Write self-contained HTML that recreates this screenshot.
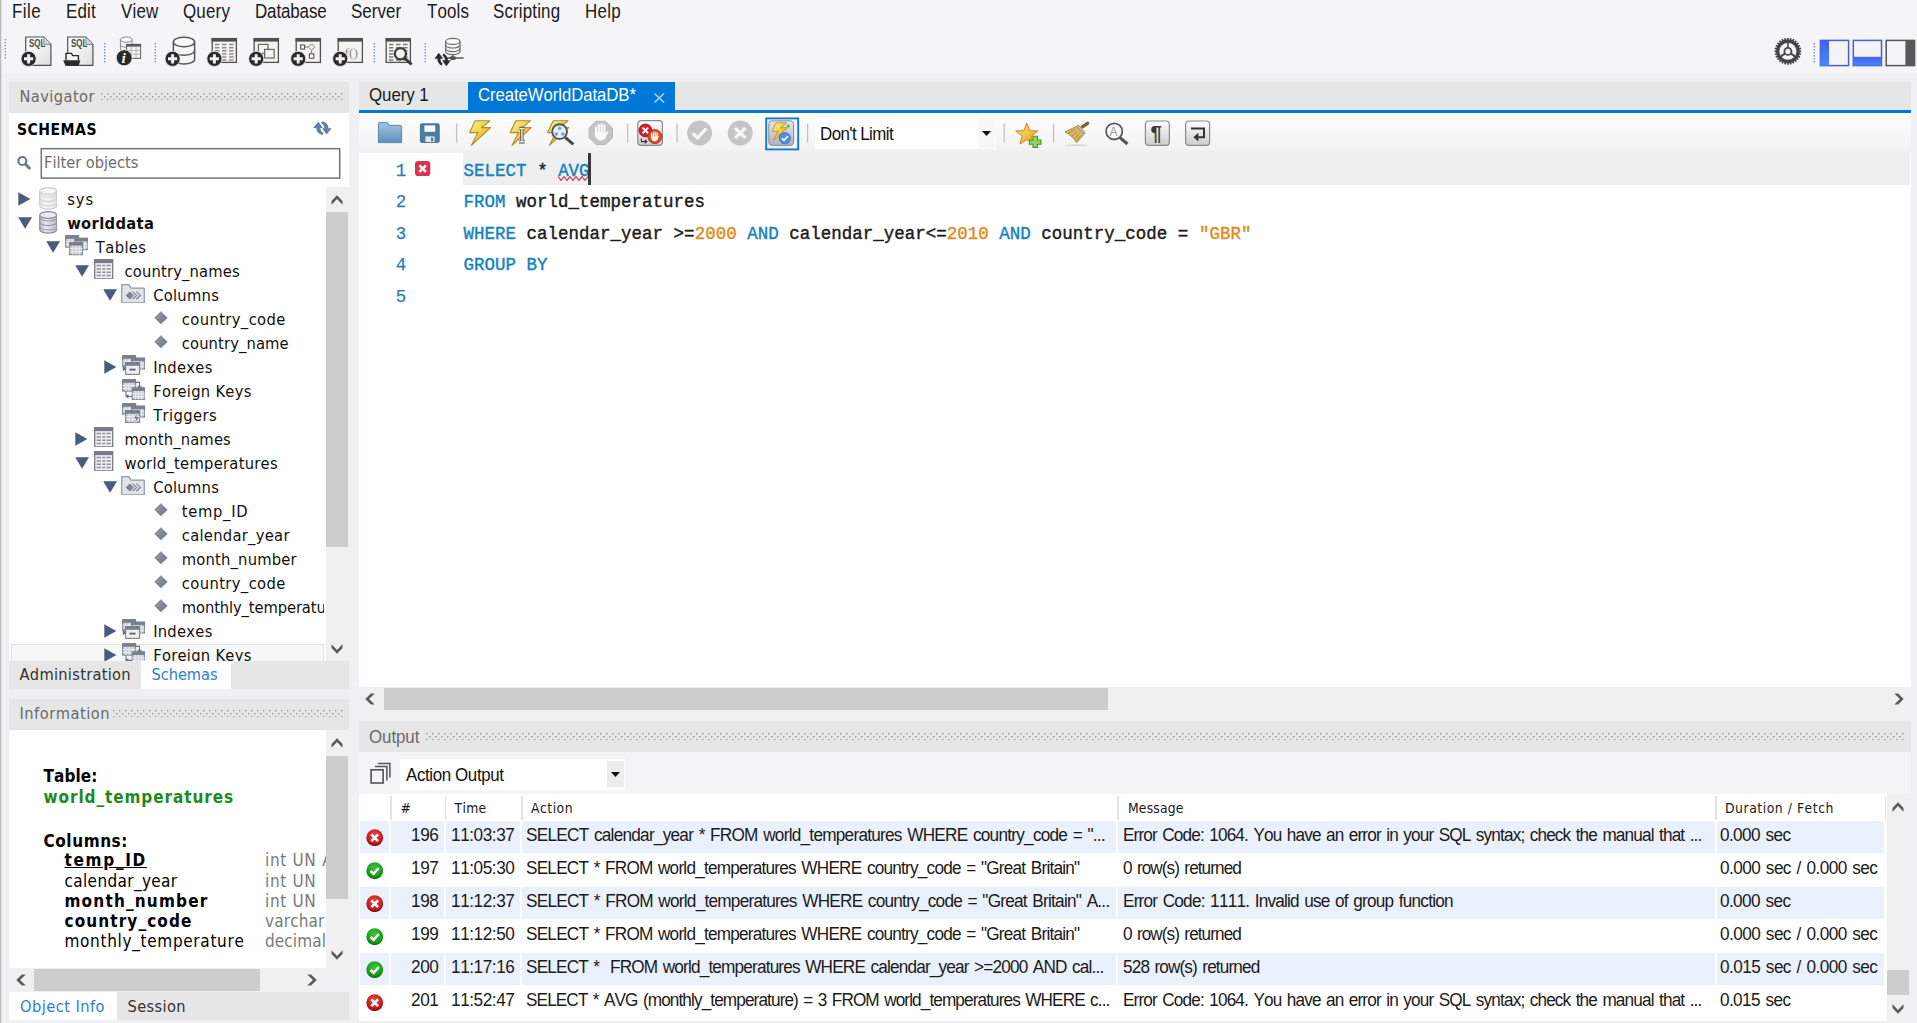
<!DOCTYPE html>
<html><head><meta charset="utf-8"><title>MySQL Workbench</title><style>
html,body{margin:0;padding:0}
body{width:1917px;height:1023px;overflow:hidden;background:#f0f0f3;position:relative;font-kerning:none;-webkit-font-smoothing:antialiased}
.b{position:absolute;display:block}
.t{position:absolute;white-space:pre;display:block}
</style></head><body>
<div class="b" style="left:0px;top:0px;width:1917px;height:72.5px;background:#f5f5f8;"></div>
<div class="b" style="left:0px;top:0px;width:1px;height:1023px;background:#b9b9b9;"></div>
<div class="b" style="left:1px;top:0px;width:1px;height:1023px;background:#e2e2e4;"></div>
<span class="t" style="font-family:'Liberation Sans',sans-serif;font-size:19.3px;line-height:25px;color:#1a1a1a;top:-0.59px;letter-spacing:0.494px;left:12.00px;transform:scaleX(0.88);transform-origin:0 0;">File</span>
<span class="t" style="font-family:'Liberation Sans',sans-serif;font-size:19.3px;line-height:25px;color:#1a1a1a;top:-0.59px;letter-spacing:0.181px;left:65.70px;transform:scaleX(0.88);transform-origin:0 0;">Edit</span>
<span class="t" style="font-family:'Liberation Sans',sans-serif;font-size:19.3px;line-height:25px;color:#1a1a1a;top:-0.59px;letter-spacing:0.227px;left:121.00px;transform:scaleX(0.88);transform-origin:0 0;">View</span>
<span class="t" style="font-family:'Liberation Sans',sans-serif;font-size:19.3px;line-height:25px;color:#1a1a1a;top:-0.59px;letter-spacing:0.194px;left:182.50px;transform:scaleX(0.88);transform-origin:0 0;">Query</span>
<span class="t" style="font-family:'Liberation Sans',sans-serif;font-size:19.3px;line-height:25px;color:#1a1a1a;top:-0.59px;letter-spacing:-0.155px;left:254.50px;transform:scaleX(0.88);transform-origin:0 0;">Database</span>
<span class="t" style="font-family:'Liberation Sans',sans-serif;font-size:19.3px;line-height:25px;color:#1a1a1a;top:-0.59px;letter-spacing:0.016px;left:350.50px;transform:scaleX(0.88);transform-origin:0 0;">Server</span>
<span class="t" style="font-family:'Liberation Sans',sans-serif;font-size:19.3px;line-height:25px;color:#1a1a1a;top:-0.59px;letter-spacing:0.137px;left:426.50px;transform:scaleX(0.88);transform-origin:0 0;">Tools</span>
<span class="t" style="font-family:'Liberation Sans',sans-serif;font-size:19.3px;line-height:25px;color:#1a1a1a;top:-0.59px;letter-spacing:0.156px;left:493.20px;transform:scaleX(0.88);transform-origin:0 0;">Scripting</span>
<span class="t" style="font-family:'Liberation Sans',sans-serif;font-size:19.3px;line-height:25px;color:#1a1a1a;top:-0.59px;letter-spacing:0.307px;left:584.80px;transform:scaleX(0.88);transform-origin:0 0;">Help</span>
<svg class="b" style="left:0px;top:0px;" width="1917" height="72" viewBox="0 0 1917 72"><defs><linearGradient id="docg" x1="0" y1="0" x2="1" y2="1"><stop offset="0" stop-color="#fdfdfd"/><stop offset="0.5" stop-color="#f1f1f1"/><stop offset="1" stop-color="#dedede"/></linearGradient></defs><rect x="4.6" y="39" width="1.4" height="1.4" fill="#7790b6"/><rect x="4.6" y="42" width="1.4" height="1.4" fill="#7790b6"/><rect x="4.6" y="45" width="1.4" height="1.4" fill="#7790b6"/><rect x="4.6" y="48" width="1.4" height="1.4" fill="#7790b6"/><rect x="4.6" y="51" width="1.4" height="1.4" fill="#7790b6"/><rect x="4.6" y="54" width="1.4" height="1.4" fill="#7790b6"/><rect x="4.6" y="57" width="1.4" height="1.4" fill="#7790b6"/><rect x="104" y="43" width="1.4" height="1.4" fill="#7790b6"/><rect x="104" y="46" width="1.4" height="1.4" fill="#7790b6"/><rect x="104" y="49" width="1.4" height="1.4" fill="#7790b6"/><rect x="104" y="52" width="1.4" height="1.4" fill="#7790b6"/><rect x="104" y="55" width="1.4" height="1.4" fill="#7790b6"/><rect x="104" y="58" width="1.4" height="1.4" fill="#7790b6"/><rect x="104" y="61" width="1.4" height="1.4" fill="#7790b6"/><rect x="154.6" y="43" width="1.4" height="1.4" fill="#7790b6"/><rect x="154.6" y="46" width="1.4" height="1.4" fill="#7790b6"/><rect x="154.6" y="49" width="1.4" height="1.4" fill="#7790b6"/><rect x="154.6" y="52" width="1.4" height="1.4" fill="#7790b6"/><rect x="154.6" y="55" width="1.4" height="1.4" fill="#7790b6"/><rect x="154.6" y="58" width="1.4" height="1.4" fill="#7790b6"/><rect x="154.6" y="61" width="1.4" height="1.4" fill="#7790b6"/><rect x="373.6" y="43" width="1.4" height="1.4" fill="#7790b6"/><rect x="373.6" y="46" width="1.4" height="1.4" fill="#7790b6"/><rect x="373.6" y="49" width="1.4" height="1.4" fill="#7790b6"/><rect x="373.6" y="52" width="1.4" height="1.4" fill="#7790b6"/><rect x="373.6" y="55" width="1.4" height="1.4" fill="#7790b6"/><rect x="373.6" y="58" width="1.4" height="1.4" fill="#7790b6"/><rect x="373.6" y="61" width="1.4" height="1.4" fill="#7790b6"/><rect x="424.6" y="43" width="1.4" height="1.4" fill="#7790b6"/><rect x="424.6" y="46" width="1.4" height="1.4" fill="#7790b6"/><rect x="424.6" y="49" width="1.4" height="1.4" fill="#7790b6"/><rect x="424.6" y="52" width="1.4" height="1.4" fill="#7790b6"/><rect x="424.6" y="55" width="1.4" height="1.4" fill="#7790b6"/><rect x="424.6" y="58" width="1.4" height="1.4" fill="#7790b6"/><rect x="424.6" y="61" width="1.4" height="1.4" fill="#7790b6"/><path d="M25.7 37 H43.9 L50.9 44.4 V65.4 H25.7 Z" fill="url(#docg)" stroke="#505050" stroke-width="1.2"/><path d="M43.9 37 V44.4 H50.9" fill="#d8d8d8" stroke="#707070" stroke-width="0.8"/><text x="28.9" y="46.9" font-family="Liberation Sans,sans-serif" font-weight="bold" font-size="10.6" fill="#4a4a4a" textLength="16.5" lengthAdjust="spacingAndGlyphs">SQL</text><circle cx="28.6" cy="58.8" r="7.6" fill="#2a2a2a" stroke="#f5f5f8" stroke-width="0.8"/><path d="M24 58.8 H33.2 M28.6 54.2 V63.4" stroke="#f2f2f2" stroke-width="2.9"/><path d="M67.7 37 H85.9 L92.9 44.4 V65.4 H67.7 Z" fill="url(#docg)" stroke="#505050" stroke-width="1.2"/><path d="M85.9 37 V44.4 H92.9" fill="#d8d8d8" stroke="#707070" stroke-width="0.8"/><text x="70.9" y="46.9" font-family="Liberation Sans,sans-serif" font-weight="bold" font-size="10.6" fill="#4a4a4a" textLength="16.5" lengthAdjust="spacingAndGlyphs">SQL</text><path d="M63.2 60.2 H80.4 L78.6 65.8 H65.4 Z" fill="#2a2a2a"/><path d="M66 60 V53.4 H71.4 L72.8 55.6 H78.4 V60" fill="#f3f3f3" stroke="#2a2a2a" stroke-width="1.4"/><path d="M120.4 39.6 V50 A5.8 2.6 0 0 0 132 50 V39.6" fill="#f2f2f2" stroke="#8a8a8a" stroke-width="1"/><ellipse cx="126.2" cy="39.6" rx="5.8" ry="2.6" fill="#fafafa" stroke="#8a8a8a" stroke-width="1"/><path d="M120.4 44.6 A5.8 2.6 0 0 0 132 44.6" fill="none" stroke="#8a8a8a" stroke-width="0.9"/><rect x="126.6" y="44.4" width="14" height="14" fill="#f3f3f3" stroke="#6a6a6a" stroke-width="1.1"/><rect x="126.2" y="44" width="14.8" height="2.6" fill="#5a5a5a"/><path d="M131.2 47 V58 M136 47 V58 M127 50.4 H140.4 M127 54.2 H140.4" stroke="#b0b0b0" stroke-width="0.9"/><circle cx="124.2" cy="57.8" r="8" fill="#2a2a2a" stroke="#f5f5f8" stroke-width="0.8"/><text x="121.6" y="63.4" font-family="Liberation Serif,serif" font-style="italic" font-weight="bold" font-size="15.5" fill="#f4f4f4">i</text><path d="M173.4 42 V59.4 A10.6 4.6 0 0 0 194.6 59.4 V42" fill="#f6f6f6" stroke="#555" stroke-width="1.5"/><path d="M173.4 50.6 A10.6 4.6 0 0 0 194.6 50.6" fill="none" stroke="#555" stroke-width="1.4"/><ellipse cx="184" cy="42" rx="10.6" ry="4.8" fill="#fafafa" stroke="#555" stroke-width="1.5"/><circle cx="172.6" cy="58.8" r="7.6" fill="#2a2a2a" stroke="#f5f5f8" stroke-width="0.8"/><path d="M168 58.8 H177.2 M172.6 54.2 V63.4" stroke="#f2f2f2" stroke-width="2.9"/><rect x="212.2" y="38.6" width="24.2" height="23.8" fill="#f4f3f1" stroke="#4f4f4f" stroke-width="1.3"/><rect x="211.6" y="38" width="25.4" height="3.6" fill="#4f4f4f"/><path d="M215 44.6 H219.4 M222 44.6 H226.4 M229 44.6 H233.6" stroke="#8c8c8c" stroke-width="1.5"/><path d="M215 47.7 H219.4 M222 47.7 H226.4 M229 47.7 H233.6" stroke="#8c8c8c" stroke-width="1.5"/><path d="M215 50.8 H219.4 M222 50.8 H226.4 M229 50.8 H233.6" stroke="#8c8c8c" stroke-width="1.5"/><path d="M215 53.9 H219.4 M222 53.9 H226.4 M229 53.9 H233.6" stroke="#8c8c8c" stroke-width="1.5"/><path d="M215 57 H219.4 M222 57 H226.4 M229 57 H233.6" stroke="#8c8c8c" stroke-width="1.5"/><path d="M215 60.1 H219.4 M222 60.1 H226.4 M229 60.1 H233.6" stroke="#8c8c8c" stroke-width="1.5"/><circle cx="214.4" cy="58.8" r="7.6" fill="#2a2a2a" stroke="#f5f5f8" stroke-width="0.8"/><path d="M209.8 58.8 H219 M214.4 54.2 V63.4" stroke="#f2f2f2" stroke-width="2.9"/><rect x="254.2" y="38.6" width="24.2" height="23.8" fill="#f4f3f1" stroke="#4f4f4f" stroke-width="1.3"/><rect x="253.6" y="38" width="25.4" height="3.6" fill="#4f4f4f"/><rect x="258.4" y="44.4" width="9.6" height="9" fill="none" stroke="#666" stroke-width="1.2"/><rect x="264.6" y="49.4" width="9.6" height="8.6" fill="#f4f3f1" stroke="#666" stroke-width="1.2"/><circle cx="256.2" cy="58.8" r="7.6" fill="#2a2a2a" stroke="#f5f5f8" stroke-width="0.8"/><path d="M251.6 58.8 H260.8 M256.2 54.2 V63.4" stroke="#f2f2f2" stroke-width="2.9"/><rect x="296.2" y="38.6" width="24.2" height="23.8" fill="#f4f3f1" stroke="#4f4f4f" stroke-width="1.3"/><rect x="295.6" y="38" width="25.4" height="3.6" fill="#4f4f4f"/><rect x="300.6" y="45" width="4" height="4" fill="#fff" stroke="#555" stroke-width="1.1"/><path d="M305 47 H308.6" stroke="#777" stroke-width="1"/><path d="M311.6 43.8 L314.8 47 L311.6 50.2 L308.4 47 Z" fill="#fff" stroke="#777" stroke-width="1"/><path d="M311.6 50.4 V53.6" stroke="#777" stroke-width="1"/><rect x="309.4" y="53.8" width="4.4" height="4.4" fill="#fff" stroke="#555" stroke-width="1.1"/><circle cx="298.2" cy="58.8" r="7.6" fill="#2a2a2a" stroke="#f5f5f8" stroke-width="0.8"/><path d="M293.6 58.8 H302.8 M298.2 54.2 V63.4" stroke="#f2f2f2" stroke-width="2.9"/><rect x="338.2" y="38.6" width="24.2" height="23.8" fill="#f4f3f1" stroke="#4f4f4f" stroke-width="1.3"/><rect x="337.6" y="38" width="25.4" height="3.6" fill="#4f4f4f"/><text x="344.6" y="57" font-family="Liberation Serif,serif" font-size="13" fill="#8a8a8a" textLength="13.5" lengthAdjust="spacingAndGlyphs">f()</text><circle cx="340.2" cy="58.8" r="7.6" fill="#2a2a2a" stroke="#f5f5f8" stroke-width="0.8"/><path d="M335.6 58.8 H344.8 M340.2 54.2 V63.4" stroke="#f2f2f2" stroke-width="2.9"/><rect x="386.2" y="38.6" width="24.2" height="23.8" fill="#f4f3f1" stroke="#4f4f4f" stroke-width="1.3"/><rect x="385.6" y="38" width="25.4" height="3.6" fill="#4f4f4f"/><path d="M389 44.6 H393.4 M396 44.6 H400.4 M403 44.6 H407.6" stroke="#7c7c7c" stroke-width="1.5"/><path d="M389 47.7 H393.4 M396 47.7 H400.4 M403 47.7 H407.6" stroke="#7c7c7c" stroke-width="1.5"/><path d="M389 50.8 H393.4 M396 50.8 H400.4 M403 50.8 H407.6" stroke="#7c7c7c" stroke-width="1.5"/><path d="M389 53.9 H393.4 M396 53.9 H400.4 M403 53.9 H407.6" stroke="#7c7c7c" stroke-width="1.5"/><path d="M389 57 H393.4 M396 57 H400.4 M403 57 H407.6" stroke="#7c7c7c" stroke-width="1.5"/><path d="M389 60.1 H393.4 M396 60.1 H400.4 M403 60.1 H407.6" stroke="#7c7c7c" stroke-width="1.5"/><circle cx="400.4" cy="53.8" r="5.6" fill="#f4f3f1" stroke="#3a3a3a" stroke-width="2.2"/><path d="M404.6 58 L411.6 64.6" stroke="#3a3a3a" stroke-width="2.8"/><path d="M445.6 41.4 V51.6 A7.2 3 0 0 0 460 51.6 V41.4" fill="#f6f6f6" stroke="#6a6a6a" stroke-width="1.2"/><path d="M445.6 45 A7.2 3 0 0 0 460 45 M445.6 48.6 A7.2 3 0 0 0 460 48.6" fill="none" stroke="#6a6a6a" stroke-width="1.1"/><ellipse cx="452.8" cy="41.4" rx="7.2" ry="3" fill="#fafafa" stroke="#6a6a6a" stroke-width="1.2"/><path d="M452.8 54.6 V57.4 M447 58 H463.6" stroke="#555" stroke-width="1.4"/><ellipse cx="452.8" cy="58" rx="3.2" ry="2" fill="#555"/><path d="M438.8 52.8 L434.4 58.8 H437.3 Q437.6 63.6 441.6 65.6 L442.6 63.6 Q440.4 62 440.3 58.8 H443.2 Z" fill="#2a2a2a"/><path d="M446.4 66.2 L450.8 60.2 H447.9 Q447.6 55.4 443.6 53.4 L442.6 55.4 Q444.8 57 444.9 60.2 H442 Z" fill="#2a2a2a"/><rect x="1813.6" y="43" width="1.4" height="1.4" fill="#7790b6"/><rect x="1813.6" y="46" width="1.4" height="1.4" fill="#7790b6"/><rect x="1813.6" y="49" width="1.4" height="1.4" fill="#7790b6"/><rect x="1813.6" y="52" width="1.4" height="1.4" fill="#7790b6"/><rect x="1813.6" y="55" width="1.4" height="1.4" fill="#7790b6"/><rect x="1813.6" y="58" width="1.4" height="1.4" fill="#7790b6"/><rect x="1813.6" y="61" width="1.4" height="1.4" fill="#7790b6"/><path d="M1798.9 51.3 L1801.3 51.3" stroke="#454545" stroke-width="1.7"/><path d="M1798.62 53.7477 L1800.96 54.2818" stroke="#454545" stroke-width="1.7"/><path d="M1797.81 56.0727 L1799.97 57.114" stroke="#454545" stroke-width="1.7"/><path d="M1796.5 58.1584 L1798.38 59.6548" stroke="#454545" stroke-width="1.7"/><path d="M1794.76 59.9001 L1796.25 61.7765" stroke="#454545" stroke-width="1.7"/><path d="M1792.67 61.2107 L1793.71 63.373" stroke="#454545" stroke-width="1.7"/><path d="M1790.35 62.0242 L1790.88 64.364" stroke="#454545" stroke-width="1.7"/><path d="M1787.9 62.3 L1787.9 64.7" stroke="#454545" stroke-width="1.7"/><path d="M1785.45 62.0242 L1784.92 64.364" stroke="#454545" stroke-width="1.7"/><path d="M1783.13 61.2107 L1782.09 63.373" stroke="#454545" stroke-width="1.7"/><path d="M1781.04 59.9001 L1779.55 61.7765" stroke="#454545" stroke-width="1.7"/><path d="M1779.3 58.1584 L1777.42 59.6548" stroke="#454545" stroke-width="1.7"/><path d="M1777.99 56.0727 L1775.83 57.114" stroke="#454545" stroke-width="1.7"/><path d="M1777.18 53.7477 L1774.84 54.2818" stroke="#454545" stroke-width="1.7"/><path d="M1776.9 51.3 L1774.5 51.3" stroke="#454545" stroke-width="1.7"/><path d="M1777.18 48.8523 L1774.84 48.3182" stroke="#454545" stroke-width="1.7"/><path d="M1777.99 46.5273 L1775.83 45.486" stroke="#454545" stroke-width="1.7"/><path d="M1779.3 44.4416 L1777.42 42.9452" stroke="#454545" stroke-width="1.7"/><path d="M1781.04 42.6999 L1779.55 40.8235" stroke="#454545" stroke-width="1.7"/><path d="M1783.13 41.3893 L1782.09 39.227" stroke="#454545" stroke-width="1.7"/><path d="M1785.45 40.5758 L1784.92 38.236" stroke="#454545" stroke-width="1.7"/><path d="M1787.9 40.3 L1787.9 37.9" stroke="#454545" stroke-width="1.7"/><path d="M1790.35 40.5758 L1790.88 38.236" stroke="#454545" stroke-width="1.7"/><path d="M1792.67 41.3893 L1793.71 39.227" stroke="#454545" stroke-width="1.7"/><path d="M1794.76 42.6999 L1796.25 40.8235" stroke="#454545" stroke-width="1.7"/><path d="M1796.5 44.4416 L1798.38 42.9452" stroke="#454545" stroke-width="1.7"/><path d="M1797.81 46.5273 L1799.97 45.486" stroke="#454545" stroke-width="1.7"/><path d="M1798.62 48.8523 L1800.96 48.3182" stroke="#454545" stroke-width="1.7"/><circle cx="1787.9" cy="51.3" r="10.2" fill="none" stroke="#454545" stroke-width="3.3"/><circle cx="1787.9" cy="51.4" r="3.5" fill="none" stroke="#454545" stroke-width="1.8"/><path d="M1787.9 42.6 V47.8" stroke="#454545" stroke-width="1.6"/><path d="M1780.4 58 Q1781.6 54.6 1785.2 53.8 M1795.4 58 Q1794.2 54.6 1790.6 53.8" stroke="#454545" stroke-width="1.9" fill="none"/><defs><linearGradient id="lbg" x1="0" y1="0" x2="0" y2="1"><stop offset="0" stop-color="#3f62f6"/><stop offset="1" stop-color="#4a86f7"/></linearGradient></defs><rect x="1820.4" y="40.4" width="28.2" height="25.2" fill="#f4f4f8" stroke="#4c5ed0" stroke-width="1.5"/><rect x="1820.4" y="40.4" width="8.6" height="25.2" fill="url(#lbg)"/><rect x="1853.3" y="40.4" width="28.2" height="25.2" fill="#f4f4f8" stroke="#4c5ed0" stroke-width="1.5"/><rect x="1853.3" y="56.8" width="28.2" height="8.8" fill="url(#lbg)"/><rect x="1886.2" y="40.4" width="28.4" height="25.2" fill="#f4f4f6" stroke="#565656" stroke-width="1.5"/><rect x="1905.4" y="40.4" width="9.4" height="25.2" fill="#585858"/></svg>
<div class="b" style="left:9px;top:82px;width:340px;height:30.5px;background:#e6e6e6;"></div>
<svg class="b" style="left:100.5px;top:93.4px;" width="242" height="7.5" viewBox="0 0 242 7.5"><defs><pattern id="p100_93" width="6" height="6" patternUnits="userSpaceOnUse"><rect x="0" y="0" width="1.45" height="1.45" fill="#989898"/><rect x="3" y="3" width="1.45" height="1.45" fill="#989898"/></pattern></defs><rect x="0" y="0" width="242" height="7" fill="url(#p100_93)"/></svg>
<span class="t" style="font-family:'DejaVu Sans Condensed','DejaVu Sans',sans-serif;font-size:16.3px;line-height:21px;color:#6a6a6a;top:86.16px;letter-spacing:0.418px;left:19.50px;">Navigator</span>
<div class="b" style="left:9px;top:112.5px;width:340px;height:548.5px;background:#fff;"></div>
<span class="t" style="font-family:'DejaVu Sans Condensed','DejaVu Sans',sans-serif;font-size:15.6px;line-height:20px;color:#000;top:119.80px;letter-spacing:0.473px;font-weight:bold;left:17.00px;">SCHEMAS</span>
<svg class="b" style="left:313px;top:121px;" width="19" height="15" viewBox="0 0 19 15"><path d="M5.3 0.6 L0.1 6.9 H3.3 Q3.6 12.4 9.6 14 L10.7 12 Q7.5 10.6 7.4 6.9 H9.7 Z" fill="#657f9f"/><g transform="rotate(180 9.4 7.1)"><path d="M5.3 0.6 L0.1 6.9 H3.3 Q3.6 12.4 9.6 14 L10.7 12 Q7.5 10.6 7.4 6.9 H9.7 Z" fill="#657f9f"/></g></svg>
<svg class="b" style="left:16.5px;top:155.5px;" width="14.5" height="14.5" viewBox="0 0 14.5 14.5"><circle cx="5.3" cy="5" r="4" fill="none" stroke="#6b7888" stroke-width="2.2"/><path d="M8.2 8 L13.2 13" stroke="#6b7888" stroke-width="2.8"/></svg>
<svg class="b" style="left:39px;top:146px;" width="304" height="35" viewBox="39 146 304 35"><rect x="41.3" y="148.7" width="298.4" height="29.4" fill="#fff" stroke="#737373" stroke-width="1.5"/></svg>
<span class="t" style="font-family:'DejaVu Sans Condensed','DejaVu Sans',sans-serif;font-size:16.3px;line-height:21px;color:#6d6d6d;top:152.16px;letter-spacing:-0.028px;left:44.00px;">Filter objects</span>
<div class="b" style="left:11px;top:643.5px;width:313px;height:18px;background:#f7f7f7;border:1px solid #e2e2e2;border-bottom:none;box-sizing:border-box;"></div>
<div class="b" style="left:9px;top:186px;width:314.5px;height:475px;overflow:hidden">
<svg class="b" style="left:9px;top:5.8px;" width="13" height="14" viewBox="0 0 13 14"><path d="M0.3 0.3 L12.4 7 L0.3 13.7 Z" fill="#4b5b7d"/></svg>
<svg class="b" style="left:29.6px;top:0.8px;" width="18.4" height="23" viewBox="0 0 18.4 23"><defs><linearGradient id="dbg0" x1="0" x2="1"><stop offset="0" stop-color="#e4e4e4"/><stop offset="0.35" stop-color="#f6f6f6"/><stop offset="1" stop-color="#e4e4e4"/></linearGradient></defs><path d="M0.7 4 V18.6 A8.5 3.6 0 0 0 17.7 18.6 V4" fill="url(#dbg0)" stroke="#cfcfcf" stroke-width="1.2"/><path d="M0.7 11.2 A8.5 3.4 0 0 0 17.7 11.2" fill="none" stroke="#cfcfcf" stroke-width="1.1"/><path d="M0.7 6.6 A8.5 3.4 0 0 0 17.7 6.6" fill="none" stroke="#cfcfcf" stroke-width="0.9"/><path d="M0.7 15.6 A8.5 3.4 0 0 0 17.7 15.6" fill="none" stroke="#cfcfcf" stroke-width="0.9"/><ellipse cx="9.2" cy="4" rx="8.5" ry="3.4" fill="#f6f6f6" stroke="#cfcfcf" stroke-width="1.2"/></svg>
<span class="t" style="font-family:'DejaVu Sans Condensed','DejaVu Sans',sans-serif;font-size:16.4px;line-height:21px;color:#111;top:3.12px;letter-spacing:0.964px;left:58.20px;">sys</span>
<svg class="b" style="left:8.5px;top:30.9px;" width="14.4" height="12" viewBox="0 0 14.4 12"><path d="M0.2 0.2 H14 L7.1 11.8 Z" fill="#4b5b7d"/></svg>
<svg class="b" style="left:29.6px;top:24.8px;" width="18.4" height="23" viewBox="0 0 18.4 23"><defs><linearGradient id="dbg1" x1="0" x2="1"><stop offset="0" stop-color="#b9bcc2"/><stop offset="0.35" stop-color="#e9eaec"/><stop offset="1" stop-color="#b9bcc2"/></linearGradient></defs><path d="M0.7 4 V18.6 A8.5 3.6 0 0 0 17.7 18.6 V4" fill="url(#dbg1)" stroke="#8d929b" stroke-width="1.2"/><path d="M0.7 11.2 A8.5 3.4 0 0 0 17.7 11.2" fill="none" stroke="#8d929b" stroke-width="1.1"/><path d="M0.7 6.6 A8.5 3.4 0 0 0 17.7 6.6" fill="none" stroke="#8d929b" stroke-width="0.9"/><path d="M0.7 15.6 A8.5 3.4 0 0 0 17.7 15.6" fill="none" stroke="#8d929b" stroke-width="0.9"/><ellipse cx="9.2" cy="4" rx="8.5" ry="3.4" fill="#e9eaec" stroke="#8d929b" stroke-width="1.2"/></svg>
<span class="t" style="font-family:'DejaVu Sans Condensed','DejaVu Sans',sans-serif;font-size:16.4px;line-height:21px;color:#111;top:27.12px;letter-spacing:0.313px;font-weight:bold;left:58.20px;">worlddata</span>
<svg class="b" style="left:37px;top:54.9px;" width="14.4" height="12" viewBox="0 0 14.4 12"><path d="M0.2 0.2 H14 L7.1 11.8 Z" fill="#4b5b7d"/></svg>
<svg class="b" style="left:55.8px;top:49px;" width="23.6" height="20.6" viewBox="0 0 23.6 20.6"><rect x="0.6" y="0.6" width="13" height="11.5" fill="#c9cdd6" stroke="#7a808b" stroke-width="1.1"/><rect x="0.6" y="0.6" width="13" height="3.2" fill="#7a808b"/><path d="M3.85 3.8 V12.1" stroke="#eceef2" stroke-width="0.9"/><path d="M7.1 3.8 V12.1" stroke="#eceef2" stroke-width="0.9"/><path d="M10.35 3.8 V12.1" stroke="#eceef2" stroke-width="0.9"/><path d="M0.6 6.56667 H13.6" stroke="#eceef2" stroke-width="0.9"/><path d="M0.6 9.33333 H13.6" stroke="#eceef2" stroke-width="0.9"/><rect x="10" y="3.2" width="12.8" height="11.5" fill="#c9cdd6" stroke="#7a808b" stroke-width="1.1"/><rect x="10" y="3.2" width="12.8" height="3.2" fill="#7a808b"/><path d="M13.2 6.4 V14.7" stroke="#eceef2" stroke-width="0.9"/><path d="M16.4 6.4 V14.7" stroke="#eceef2" stroke-width="0.9"/><path d="M19.6 6.4 V14.7" stroke="#eceef2" stroke-width="0.9"/><path d="M10 9.16667 H22.8" stroke="#eceef2" stroke-width="0.9"/><path d="M10 11.9333 H22.8" stroke="#eceef2" stroke-width="0.9"/><rect x="4.6" y="7.4" width="13" height="12.3" fill="#c9cdd6" stroke="#7a808b" stroke-width="1.1"/><rect x="4.6" y="7.4" width="13" height="3.2" fill="#7a808b"/><path d="M7.85 10.6 V19.7" stroke="#eceef2" stroke-width="0.9"/><path d="M11.1 10.6 V19.7" stroke="#eceef2" stroke-width="0.9"/><path d="M14.35 10.6 V19.7" stroke="#eceef2" stroke-width="0.9"/><path d="M4.6 13.6333 H17.6" stroke="#eceef2" stroke-width="0.9"/><path d="M4.6 16.6667 H17.6" stroke="#eceef2" stroke-width="0.9"/></svg>
<span class="t" style="font-family:'DejaVu Sans Condensed','DejaVu Sans',sans-serif;font-size:16.4px;line-height:21px;color:#111;top:51.12px;letter-spacing:0.377px;left:86.85px;">Tables</span>
<svg class="b" style="left:65.5px;top:78.9px;" width="14.4" height="12" viewBox="0 0 14.4 12"><path d="M0.2 0.2 H14 L7.1 11.8 Z" fill="#4b5b7d"/></svg>
<svg class="b" style="left:85.4px;top:72.9px;" width="19.4" height="20.6" viewBox="0 0 19.4 20.6"><rect x="0.7" y="0.7" width="18" height="19.2" fill="#eceef1" stroke="#767b85" stroke-width="1.3"/><rect x="0.7" y="0.7" width="18" height="3.4" fill="#767b85"/><path d="M2.6 6.6 H7 M8.2 6.6 H11.4 M12.6 6.6 H16.8" stroke="#8f949d" stroke-width="1.5"/><path d="M2.6 9.9 H7 M8.2 9.9 H11.4 M12.6 9.9 H16.8" stroke="#8f949d" stroke-width="1.5"/><path d="M2.6 13.2 H7 M8.2 13.2 H11.4 M12.6 13.2 H16.8" stroke="#8f949d" stroke-width="1.5"/><path d="M2.6 16.5 H7 M8.2 16.5 H11.4 M12.6 16.5 H16.8" stroke="#8f949d" stroke-width="1.5"/></svg>
<span class="t" style="font-family:'DejaVu Sans Condensed','DejaVu Sans',sans-serif;font-size:16.4px;line-height:21px;color:#111;top:75.12px;letter-spacing:0.167px;left:115.50px;">country_names</span>
<svg class="b" style="left:94px;top:102.9px;" width="14.4" height="12" viewBox="0 0 14.4 12"><path d="M0.2 0.2 H14 L7.1 11.8 Z" fill="#4b5b7d"/></svg>
<svg class="b" style="left:112.4px;top:97.9px;" width="24" height="19.6" viewBox="0 0 24 19.6"><path d="M0.7 18.8 V1.4 Q0.7 0.7 1.4 0.7 H8 L10 4.2 H22.6 Q23.3 4.2 23.3 4.9 V18.8 Z" fill="#e1e4ea" stroke="#9097a3" stroke-width="1.2"/><path d="M4.6 11.4 L8.8 7.4 L13 11.4 L8.8 15.4 Z" fill="#7d8592"/><path d="M11.6 7.6 L15.6 11.4 L11.6 15.2 M15.4 7.6 L19.4 11.4 L15.4 15.2" fill="none" stroke="#7d8592" stroke-width="1.2"/></svg>
<span class="t" style="font-family:'DejaVu Sans Condensed','DejaVu Sans',sans-serif;font-size:16.4px;line-height:21px;color:#111;top:99.12px;letter-spacing:0.261px;left:144.15px;">Columns</span>
<svg class="b" style="left:145.4px;top:125.3px;" width="13.8" height="13.4" viewBox="0 0 13.8 13.4"><defs><linearGradient id="dmg" x1="0" y1="0" x2="1" y2="1"><stop offset="0" stop-color="#9aa0ab"/><stop offset="1" stop-color="#6c7380"/></linearGradient></defs><path d="M6.9 0.2 L13.6 6.7 L6.9 13.2 L0.2 6.7 Z" fill="url(#dmg)"/></svg>
<span class="t" style="font-family:'DejaVu Sans Condensed','DejaVu Sans',sans-serif;font-size:16.4px;line-height:21px;color:#111;top:123.12px;letter-spacing:0.385px;left:172.80px;">country_code</span>
<svg class="b" style="left:145.4px;top:149.3px;" width="13.8" height="13.4" viewBox="0 0 13.8 13.4"><defs><linearGradient id="dmg" x1="0" y1="0" x2="1" y2="1"><stop offset="0" stop-color="#9aa0ab"/><stop offset="1" stop-color="#6c7380"/></linearGradient></defs><path d="M6.9 0.2 L13.6 6.7 L6.9 13.2 L0.2 6.7 Z" fill="url(#dmg)"/></svg>
<span class="t" style="font-family:'DejaVu Sans Condensed','DejaVu Sans',sans-serif;font-size:16.4px;line-height:21px;color:#111;top:147.12px;letter-spacing:0.114px;left:172.80px;">country_name</span>
<svg class="b" style="left:94.5px;top:173.8px;" width="13" height="14" viewBox="0 0 13 14"><path d="M0.3 0.3 L12.4 7 L0.3 13.7 Z" fill="#4b5b7d"/></svg>
<svg class="b" style="left:112.6px;top:169px;" width="23.6" height="20.6" viewBox="0 0 23.6 20.6"><rect x="0.6" y="0.6" width="13" height="10.5" fill="#c9cdd6" stroke="#7a808b" stroke-width="1.1"/><rect x="0.6" y="0.6" width="13" height="3.2" fill="#7a808b"/><path d="M3.85 3.8 V11.1" stroke="#eceef2" stroke-width="0.9"/><path d="M7.1 3.8 V11.1" stroke="#eceef2" stroke-width="0.9"/><path d="M10.35 3.8 V11.1" stroke="#eceef2" stroke-width="0.9"/><path d="M0.6 6.23333 H13.6" stroke="#eceef2" stroke-width="0.9"/><path d="M0.6 8.66667 H13.6" stroke="#eceef2" stroke-width="0.9"/><rect x="9.6" y="3" width="13" height="11" fill="#c9cdd6" stroke="#7a808b" stroke-width="1.1"/><rect x="9.6" y="3" width="13" height="3.2" fill="#7a808b"/><path d="M12.85 6.2 V14" stroke="#eceef2" stroke-width="0.9"/><path d="M16.1 6.2 V14" stroke="#eceef2" stroke-width="0.9"/><path d="M19.35 6.2 V14" stroke="#eceef2" stroke-width="0.9"/><path d="M9.6 8.8 H22.6" stroke="#eceef2" stroke-width="0.9"/><path d="M9.6 11.4 H22.6" stroke="#eceef2" stroke-width="0.9"/><rect x="3.6" y="7.6" width="14" height="11.8" fill="#eceef1" stroke="#7a808b" stroke-width="1.1"/><rect x="3.6" y="7.6" width="14" height="3.2" fill="#7a808b"/><path d="M7.5 14.6 H13.5" stroke="#5d6470" stroke-width="1.8"/><path d="M0.8 10.5 L4.2 13.6 L0.8 16.6 Z" fill="#5d6470"/></svg>
<span class="t" style="font-family:'DejaVu Sans Condensed','DejaVu Sans',sans-serif;font-size:16.4px;line-height:21px;color:#111;top:171.12px;letter-spacing:0.267px;left:144.15px;">Indexes</span>
<svg class="b" style="left:112.6px;top:193px;" width="23.6" height="20.6" viewBox="0 0 23.6 20.6"><rect x="0.6" y="0.6" width="13" height="11.5" fill="#c9cdd6" stroke="#7a808b" stroke-width="1.1"/><rect x="0.6" y="0.6" width="13" height="3.2" fill="#7a808b"/><path d="M3.85 3.8 V12.1" stroke="#eceef2" stroke-width="0.9"/><path d="M7.1 3.8 V12.1" stroke="#eceef2" stroke-width="0.9"/><path d="M10.35 3.8 V12.1" stroke="#eceef2" stroke-width="0.9"/><path d="M0.6 6.56667 H13.6" stroke="#eceef2" stroke-width="0.9"/><path d="M0.6 9.33333 H13.6" stroke="#eceef2" stroke-width="0.9"/><rect x="10.2" y="8.8" width="12.6" height="11.8" fill="#c9cdd6" stroke="#7a808b" stroke-width="1.1"/><rect x="10.2" y="8.8" width="12.6" height="3.2" fill="#7a808b"/><path d="M13.35 12 V20.6" stroke="#eceef2" stroke-width="0.9"/><path d="M16.5 12 V20.6" stroke="#eceef2" stroke-width="0.9"/><path d="M19.65 12 V20.6" stroke="#eceef2" stroke-width="0.9"/><path d="M10.2 14.8667 H22.8" stroke="#eceef2" stroke-width="0.9"/><path d="M10.2 17.7333 H22.8" stroke="#eceef2" stroke-width="0.9"/><path d="M13.6 3.4 H17.5 V8.8 M15.6 6.8 L17.5 8.8 L19.4 6.8" stroke="#6b717c" stroke-width="1.1" fill="none"/><path d="M4 12.2 V17.4 H10 M6.4 15.6 L4.4 17.4 L6.4 19.2" stroke="#6b717c" stroke-width="1.1" fill="none"/></svg>
<span class="t" style="font-family:'DejaVu Sans Condensed','DejaVu Sans',sans-serif;font-size:16.4px;line-height:21px;color:#111;top:195.12px;letter-spacing:0.265px;left:144.15px;">Foreign Keys</span>
<svg class="b" style="left:112.6px;top:217px;" width="23.6" height="20.6" viewBox="0 0 23.6 20.6"><rect x="0.6" y="0.6" width="13" height="10.5" fill="#c9cdd6" stroke="#7a808b" stroke-width="1.1"/><rect x="0.6" y="0.6" width="13" height="3.2" fill="#7a808b"/><path d="M3.85 3.8 V11.1" stroke="#eceef2" stroke-width="0.9"/><path d="M7.1 3.8 V11.1" stroke="#eceef2" stroke-width="0.9"/><path d="M10.35 3.8 V11.1" stroke="#eceef2" stroke-width="0.9"/><path d="M0.6 6.23333 H13.6" stroke="#eceef2" stroke-width="0.9"/><path d="M0.6 8.66667 H13.6" stroke="#eceef2" stroke-width="0.9"/><rect x="9.6" y="3" width="13" height="11" fill="#c9cdd6" stroke="#7a808b" stroke-width="1.1"/><rect x="9.6" y="3" width="13" height="3.2" fill="#7a808b"/><path d="M12.85 6.2 V14" stroke="#eceef2" stroke-width="0.9"/><path d="M16.1 6.2 V14" stroke="#eceef2" stroke-width="0.9"/><path d="M19.35 6.2 V14" stroke="#eceef2" stroke-width="0.9"/><path d="M9.6 8.8 H22.6" stroke="#eceef2" stroke-width="0.9"/><path d="M9.6 11.4 H22.6" stroke="#eceef2" stroke-width="0.9"/><rect x="3.6" y="7.6" width="14" height="11.8" fill="#c9cdd6" stroke="#7a808b" stroke-width="1.1"/><rect x="3.6" y="7.6" width="14" height="3.2" fill="#7a808b"/><path d="M7.1 10.8 V19.4" stroke="#eceef2" stroke-width="0.9"/><path d="M10.6 10.8 V19.4" stroke="#eceef2" stroke-width="0.9"/><path d="M14.1 10.8 V19.4" stroke="#eceef2" stroke-width="0.9"/><path d="M3.6 13.6667 H17.6" stroke="#eceef2" stroke-width="0.9"/><path d="M3.6 16.5333 H17.6" stroke="#eceef2" stroke-width="0.9"/><path d="M15.4 10.6 L11.6 15.6 H14.2 L12.6 20 L17.4 14 H14.6 Z" fill="#5d6470" stroke="#eceef1" stroke-width="0.5"/></svg>
<span class="t" style="font-family:'DejaVu Sans Condensed','DejaVu Sans',sans-serif;font-size:16.4px;line-height:21px;color:#111;top:219.12px;letter-spacing:0.412px;left:144.15px;">Triggers</span>
<svg class="b" style="left:66px;top:245.8px;" width="13" height="14" viewBox="0 0 13 14"><path d="M0.3 0.3 L12.4 7 L0.3 13.7 Z" fill="#4b5b7d"/></svg>
<svg class="b" style="left:85.4px;top:240.9px;" width="19.4" height="20.6" viewBox="0 0 19.4 20.6"><rect x="0.7" y="0.7" width="18" height="19.2" fill="#eceef1" stroke="#767b85" stroke-width="1.3"/><rect x="0.7" y="0.7" width="18" height="3.4" fill="#767b85"/><path d="M2.6 6.6 H7 M8.2 6.6 H11.4 M12.6 6.6 H16.8" stroke="#8f949d" stroke-width="1.5"/><path d="M2.6 9.9 H7 M8.2 9.9 H11.4 M12.6 9.9 H16.8" stroke="#8f949d" stroke-width="1.5"/><path d="M2.6 13.2 H7 M8.2 13.2 H11.4 M12.6 13.2 H16.8" stroke="#8f949d" stroke-width="1.5"/><path d="M2.6 16.5 H7 M8.2 16.5 H11.4 M12.6 16.5 H16.8" stroke="#8f949d" stroke-width="1.5"/></svg>
<span class="t" style="font-family:'DejaVu Sans Condensed','DejaVu Sans',sans-serif;font-size:16.4px;line-height:21px;color:#111;top:243.12px;letter-spacing:0.156px;left:115.50px;">month_names</span>
<svg class="b" style="left:65.5px;top:270.9px;" width="14.4" height="12" viewBox="0 0 14.4 12"><path d="M0.2 0.2 H14 L7.1 11.8 Z" fill="#4b5b7d"/></svg>
<svg class="b" style="left:85.4px;top:264.9px;" width="19.4" height="20.6" viewBox="0 0 19.4 20.6"><rect x="0.7" y="0.7" width="18" height="19.2" fill="#eceef1" stroke="#767b85" stroke-width="1.3"/><rect x="0.7" y="0.7" width="18" height="3.4" fill="#767b85"/><path d="M2.6 6.6 H7 M8.2 6.6 H11.4 M12.6 6.6 H16.8" stroke="#8f949d" stroke-width="1.5"/><path d="M2.6 9.9 H7 M8.2 9.9 H11.4 M12.6 9.9 H16.8" stroke="#8f949d" stroke-width="1.5"/><path d="M2.6 13.2 H7 M8.2 13.2 H11.4 M12.6 13.2 H16.8" stroke="#8f949d" stroke-width="1.5"/><path d="M2.6 16.5 H7 M8.2 16.5 H11.4 M12.6 16.5 H16.8" stroke="#8f949d" stroke-width="1.5"/></svg>
<span class="t" style="font-family:'DejaVu Sans Condensed','DejaVu Sans',sans-serif;font-size:16.4px;line-height:21px;color:#111;top:267.12px;letter-spacing:0.262px;left:115.50px;">world_temperatures</span>
<svg class="b" style="left:94px;top:294.9px;" width="14.4" height="12" viewBox="0 0 14.4 12"><path d="M0.2 0.2 H14 L7.1 11.8 Z" fill="#4b5b7d"/></svg>
<svg class="b" style="left:112.4px;top:289.9px;" width="24" height="19.6" viewBox="0 0 24 19.6"><path d="M0.7 18.8 V1.4 Q0.7 0.7 1.4 0.7 H8 L10 4.2 H22.6 Q23.3 4.2 23.3 4.9 V18.8 Z" fill="#e1e4ea" stroke="#9097a3" stroke-width="1.2"/><path d="M4.6 11.4 L8.8 7.4 L13 11.4 L8.8 15.4 Z" fill="#7d8592"/><path d="M11.6 7.6 L15.6 11.4 L11.6 15.2 M15.4 7.6 L19.4 11.4 L15.4 15.2" fill="none" stroke="#7d8592" stroke-width="1.2"/></svg>
<span class="t" style="font-family:'DejaVu Sans Condensed','DejaVu Sans',sans-serif;font-size:16.4px;line-height:21px;color:#111;top:291.12px;letter-spacing:0.261px;left:144.15px;">Columns</span>
<svg class="b" style="left:145.4px;top:317.3px;" width="13.8" height="13.4" viewBox="0 0 13.8 13.4"><defs><linearGradient id="dmg" x1="0" y1="0" x2="1" y2="1"><stop offset="0" stop-color="#9aa0ab"/><stop offset="1" stop-color="#6c7380"/></linearGradient></defs><path d="M6.9 0.2 L13.6 6.7 L6.9 13.2 L0.2 6.7 Z" fill="url(#dmg)"/></svg>
<span class="t" style="font-family:'DejaVu Sans Condensed','DejaVu Sans',sans-serif;font-size:16.4px;line-height:21px;color:#111;top:315.12px;letter-spacing:0.686px;left:172.80px;">temp_ID</span>
<svg class="b" style="left:145.4px;top:341.3px;" width="13.8" height="13.4" viewBox="0 0 13.8 13.4"><defs><linearGradient id="dmg" x1="0" y1="0" x2="1" y2="1"><stop offset="0" stop-color="#9aa0ab"/><stop offset="1" stop-color="#6c7380"/></linearGradient></defs><path d="M6.9 0.2 L13.6 6.7 L6.9 13.2 L0.2 6.7 Z" fill="url(#dmg)"/></svg>
<span class="t" style="font-family:'DejaVu Sans Condensed','DejaVu Sans',sans-serif;font-size:16.4px;line-height:21px;color:#111;top:339.12px;letter-spacing:0.273px;left:172.80px;">calendar_year</span>
<svg class="b" style="left:145.4px;top:365.3px;" width="13.8" height="13.4" viewBox="0 0 13.8 13.4"><defs><linearGradient id="dmg" x1="0" y1="0" x2="1" y2="1"><stop offset="0" stop-color="#9aa0ab"/><stop offset="1" stop-color="#6c7380"/></linearGradient></defs><path d="M6.9 0.2 L13.6 6.7 L6.9 13.2 L0.2 6.7 Z" fill="url(#dmg)"/></svg>
<span class="t" style="font-family:'DejaVu Sans Condensed','DejaVu Sans',sans-serif;font-size:16.4px;line-height:21px;color:#111;top:363.12px;letter-spacing:0.181px;left:172.80px;">month_number</span>
<svg class="b" style="left:145.4px;top:389.3px;" width="13.8" height="13.4" viewBox="0 0 13.8 13.4"><defs><linearGradient id="dmg" x1="0" y1="0" x2="1" y2="1"><stop offset="0" stop-color="#9aa0ab"/><stop offset="1" stop-color="#6c7380"/></linearGradient></defs><path d="M6.9 0.2 L13.6 6.7 L6.9 13.2 L0.2 6.7 Z" fill="url(#dmg)"/></svg>
<span class="t" style="font-family:'DejaVu Sans Condensed','DejaVu Sans',sans-serif;font-size:16.4px;line-height:21px;color:#111;top:387.12px;letter-spacing:0.385px;left:172.80px;">country_code</span>
<svg class="b" style="left:145.4px;top:413.3px;" width="13.8" height="13.4" viewBox="0 0 13.8 13.4"><defs><linearGradient id="dmg" x1="0" y1="0" x2="1" y2="1"><stop offset="0" stop-color="#9aa0ab"/><stop offset="1" stop-color="#6c7380"/></linearGradient></defs><path d="M6.9 0.2 L13.6 6.7 L6.9 13.2 L0.2 6.7 Z" fill="url(#dmg)"/></svg>
<span class="t" style="font-family:'DejaVu Sans Condensed','DejaVu Sans',sans-serif;font-size:16.4px;line-height:21px;color:#111;top:411.12px;letter-spacing:-0.124px;left:172.80px;">monthly_temperature</span>
<svg class="b" style="left:94.5px;top:437.8px;" width="13" height="14" viewBox="0 0 13 14"><path d="M0.3 0.3 L12.4 7 L0.3 13.7 Z" fill="#4b5b7d"/></svg>
<svg class="b" style="left:112.6px;top:433px;" width="23.6" height="20.6" viewBox="0 0 23.6 20.6"><rect x="0.6" y="0.6" width="13" height="10.5" fill="#c9cdd6" stroke="#7a808b" stroke-width="1.1"/><rect x="0.6" y="0.6" width="13" height="3.2" fill="#7a808b"/><path d="M3.85 3.8 V11.1" stroke="#eceef2" stroke-width="0.9"/><path d="M7.1 3.8 V11.1" stroke="#eceef2" stroke-width="0.9"/><path d="M10.35 3.8 V11.1" stroke="#eceef2" stroke-width="0.9"/><path d="M0.6 6.23333 H13.6" stroke="#eceef2" stroke-width="0.9"/><path d="M0.6 8.66667 H13.6" stroke="#eceef2" stroke-width="0.9"/><rect x="9.6" y="3" width="13" height="11" fill="#c9cdd6" stroke="#7a808b" stroke-width="1.1"/><rect x="9.6" y="3" width="13" height="3.2" fill="#7a808b"/><path d="M12.85 6.2 V14" stroke="#eceef2" stroke-width="0.9"/><path d="M16.1 6.2 V14" stroke="#eceef2" stroke-width="0.9"/><path d="M19.35 6.2 V14" stroke="#eceef2" stroke-width="0.9"/><path d="M9.6 8.8 H22.6" stroke="#eceef2" stroke-width="0.9"/><path d="M9.6 11.4 H22.6" stroke="#eceef2" stroke-width="0.9"/><rect x="3.6" y="7.6" width="14" height="11.8" fill="#eceef1" stroke="#7a808b" stroke-width="1.1"/><rect x="3.6" y="7.6" width="14" height="3.2" fill="#7a808b"/><path d="M7.5 14.6 H13.5" stroke="#5d6470" stroke-width="1.8"/><path d="M0.8 10.5 L4.2 13.6 L0.8 16.6 Z" fill="#5d6470"/></svg>
<span class="t" style="font-family:'DejaVu Sans Condensed','DejaVu Sans',sans-serif;font-size:16.4px;line-height:21px;color:#111;top:435.12px;letter-spacing:0.267px;left:144.15px;">Indexes</span>
<svg class="b" style="left:94.5px;top:461.8px;" width="13" height="14" viewBox="0 0 13 14"><path d="M0.3 0.3 L12.4 7 L0.3 13.7 Z" fill="#4b5b7d"/></svg>
<svg class="b" style="left:112.6px;top:457px;" width="23.6" height="20.6" viewBox="0 0 23.6 20.6"><rect x="0.6" y="0.6" width="13" height="11.5" fill="#c9cdd6" stroke="#7a808b" stroke-width="1.1"/><rect x="0.6" y="0.6" width="13" height="3.2" fill="#7a808b"/><path d="M3.85 3.8 V12.1" stroke="#eceef2" stroke-width="0.9"/><path d="M7.1 3.8 V12.1" stroke="#eceef2" stroke-width="0.9"/><path d="M10.35 3.8 V12.1" stroke="#eceef2" stroke-width="0.9"/><path d="M0.6 6.56667 H13.6" stroke="#eceef2" stroke-width="0.9"/><path d="M0.6 9.33333 H13.6" stroke="#eceef2" stroke-width="0.9"/><rect x="10.2" y="8.8" width="12.6" height="11.8" fill="#c9cdd6" stroke="#7a808b" stroke-width="1.1"/><rect x="10.2" y="8.8" width="12.6" height="3.2" fill="#7a808b"/><path d="M13.35 12 V20.6" stroke="#eceef2" stroke-width="0.9"/><path d="M16.5 12 V20.6" stroke="#eceef2" stroke-width="0.9"/><path d="M19.65 12 V20.6" stroke="#eceef2" stroke-width="0.9"/><path d="M10.2 14.8667 H22.8" stroke="#eceef2" stroke-width="0.9"/><path d="M10.2 17.7333 H22.8" stroke="#eceef2" stroke-width="0.9"/><path d="M13.6 3.4 H17.5 V8.8 M15.6 6.8 L17.5 8.8 L19.4 6.8" stroke="#6b717c" stroke-width="1.1" fill="none"/><path d="M4 12.2 V17.4 H10 M6.4 15.6 L4.4 17.4 L6.4 19.2" stroke="#6b717c" stroke-width="1.1" fill="none"/></svg>
<span class="t" style="font-family:'DejaVu Sans Condensed','DejaVu Sans',sans-serif;font-size:16.4px;line-height:21px;color:#111;top:459.12px;letter-spacing:0.265px;left:144.15px;">Foreign Keys</span>
</div>
<div class="b" style="left:325.5px;top:186.6px;width:23.5px;height:474.4px;background:#f0f0f0;"></div>
<div class="b" style="left:326px;top:212px;width:22px;height:335px;background:#cdcdcd;"></div>
<svg class="b" style="left:328.7px;top:192.1px;" width="16" height="16" viewBox="-8 -8 16 16"><path d="M-5.5 4.7 L-5.5 0.9 L0 -4.7 L5.5 0.9 L5.5 4.7 L0 -0.9 Z" fill="#5a5a5a" transform="rotate(0)"/></svg>
<svg class="b" style="left:328.6px;top:641.2px;" width="16" height="16" viewBox="-8 -8 16 16"><path d="M-5.5 4.7 L-5.5 0.9 L0 -4.7 L5.5 0.9 L5.5 4.7 L0 -0.9 Z" fill="#5a5a5a" transform="rotate(180)"/></svg>
<div class="b" style="left:9px;top:661px;width:340px;height:28px;background:#e6e6e6;"></div>
<div class="b" style="left:141px;top:661px;width:90px;height:28px;background:#fff;"></div>
<span class="t" style="font-family:'DejaVu Sans Condensed','DejaVu Sans',sans-serif;font-size:16.3px;line-height:21px;color:#333;top:664.36px;letter-spacing:0.283px;left:19.50px;">Administration</span>
<span class="t" style="font-family:'DejaVu Sans Condensed','DejaVu Sans',sans-serif;font-size:16.3px;line-height:21px;color:#2a7fd4;top:664.36px;letter-spacing:-0.086px;left:151.50px;">Schemas</span>
<div class="b" style="left:9px;top:699px;width:340px;height:30.5px;background:#e6e6e6;"></div>
<svg class="b" style="left:112.5px;top:710.3px;" width="230" height="7.5" viewBox="0 0 230 7.5"><defs><pattern id="p112_710" width="6" height="6" patternUnits="userSpaceOnUse"><rect x="0" y="0" width="1.45" height="1.45" fill="#989898"/><rect x="3" y="3" width="1.45" height="1.45" fill="#989898"/></pattern></defs><rect x="0" y="0" width="230" height="7" fill="url(#p112_710)"/></svg>
<span class="t" style="font-family:'DejaVu Sans Condensed','DejaVu Sans',sans-serif;font-size:16.3px;line-height:21px;color:#6a6a6a;top:703.16px;letter-spacing:0.491px;left:19.50px;">Information</span>
<div class="b" style="left:9px;top:729.5px;width:316.5px;height:238px;background:#fff;"></div>
<div class="b" style="left:325.5px;top:729.5px;width:23.5px;height:238px;background:#f0f0f0;"></div>
<div class="b" style="left:326px;top:755.5px;width:22px;height:143px;background:#cdcdcd;"></div>
<svg class="b" style="left:328.5px;top:735.2px;" width="16" height="16" viewBox="-8 -8 16 16"><path d="M-5.5 4.7 L-5.5 0.9 L0 -4.7 L5.5 0.9 L5.5 4.7 L0 -0.9 Z" fill="#5a5a5a" transform="rotate(0)"/></svg>
<svg class="b" style="left:328.5px;top:946.8px;" width="16" height="16" viewBox="-8 -8 16 16"><path d="M-5.5 4.7 L-5.5 0.9 L0 -4.7 L5.5 0.9 L5.5 4.7 L0 -0.9 Z" fill="#5a5a5a" transform="rotate(180)"/></svg>
<div class="b" style="left:9px;top:729.5px;width:316.5px;height:238px;overflow:hidden">
<span class="t" style="font-family:'DejaVu Sans Condensed','DejaVu Sans',sans-serif;font-size:17px;line-height:22px;color:#000;top:35.11px;letter-spacing:0.101px;font-weight:bold;left:34.50px;">Table:</span>
<span class="t" style="font-family:'DejaVu Sans Condensed','DejaVu Sans',sans-serif;font-size:17px;line-height:22px;color:#1c8a1c;top:56.41px;letter-spacing:0.913px;font-weight:bold;left:34.50px;">world_temperatures</span>
<span class="t" style="font-family:'DejaVu Sans Condensed','DejaVu Sans',sans-serif;font-size:17px;line-height:22px;color:#000;top:100.21px;letter-spacing:0.571px;font-weight:bold;left:34.50px;">Columns:</span>
<span class="t" style="font-family:'DejaVu Sans Condensed','DejaVu Sans',sans-serif;font-size:17px;line-height:22px;color:#000;top:119.61px;letter-spacing:1.700px;font-weight:bold;left:55.50px;text-decoration:underline;">temp_ID</span>
<span class="t" style="font-family:'DejaVu Sans Condensed','DejaVu Sans',sans-serif;font-size:17px;line-height:22px;color:#000;top:140.31px;letter-spacing:0.364px;left:55.50px;">calendar_year</span>
<span class="t" style="font-family:'DejaVu Sans Condensed','DejaVu Sans',sans-serif;font-size:17px;line-height:22px;color:#000;top:160.11px;letter-spacing:1.182px;font-weight:bold;left:55.50px;">month_number</span>
<span class="t" style="font-family:'DejaVu Sans Condensed','DejaVu Sans',sans-serif;font-size:17px;line-height:22px;color:#000;top:180.61px;letter-spacing:1.107px;font-weight:bold;left:55.50px;">country_code</span>
<span class="t" style="font-family:'DejaVu Sans Condensed','DejaVu Sans',sans-serif;font-size:17px;line-height:22px;color:#000;top:200.41px;letter-spacing:0.681px;left:55.50px;">monthly_temperature</span>
<span class="t" style="font-family:'DejaVu Sans Condensed','DejaVu Sans',sans-serif;font-size:17px;line-height:22px;color:#7a7a7a;top:119.61px;letter-spacing:0.675px;left:256.00px;">int UN</span>
<span class="t" style="font-family:'DejaVu Sans Condensed','DejaVu Sans',sans-serif;font-size:17px;line-height:22px;color:#7a7a7a;top:140.31px;letter-spacing:0.675px;left:256.00px;">int UN</span>
<span class="t" style="font-family:'DejaVu Sans Condensed','DejaVu Sans',sans-serif;font-size:17px;line-height:22px;color:#7a7a7a;top:160.11px;letter-spacing:0.675px;left:256.00px;">int UN</span>
<span class="t" style="font-family:'DejaVu Sans Condensed','DejaVu Sans',sans-serif;font-size:17px;line-height:22px;color:#7a7a7a;top:180.61px;letter-spacing:0.149px;left:256.00px;">varchar</span>
<span class="t" style="font-family:'DejaVu Sans Condensed','DejaVu Sans',sans-serif;font-size:17px;line-height:22px;color:#7a7a7a;top:200.41px;letter-spacing:0.100px;left:256.00px;">decimal</span>
<span class="t" style="font-family:'DejaVu Sans Condensed','DejaVu Sans',sans-serif;font-size:17px;line-height:22px;color:#7a7a7a;top:180.61px;left:316.50px;">(3)</span>
<span class="t" style="font-family:'DejaVu Sans Condensed','DejaVu Sans',sans-serif;font-size:17px;line-height:22px;color:#7a7a7a;top:200.41px;left:318.00px;">(3,1)</span>
<span class="t" style="font-family:'DejaVu Sans Condensed','DejaVu Sans',sans-serif;font-size:17px;line-height:22px;color:#7a7a7a;top:119.61px;left:313.30px;">AI PK</span>
</div>
<div class="b" style="left:9px;top:967.5px;width:316.5px;height:24px;background:#f0f0f0;"></div>
<div class="b" style="left:34px;top:969px;width:226px;height:21.5px;background:#cdcdcd;"></div>
<svg class="b" style="left:13px;top:971.5px;" width="16" height="16" viewBox="-8 -8 16 16"><path d="M-5.5 4.7 L-5.5 0.9 L0 -4.7 L5.5 0.9 L5.5 4.7 L0 -0.9 Z" fill="#5a5a5a" transform="rotate(270)"/></svg>
<svg class="b" style="left:303.8px;top:971.5px;" width="16" height="16" viewBox="-8 -8 16 16"><path d="M-5.5 4.7 L-5.5 0.9 L0 -4.7 L5.5 0.9 L5.5 4.7 L0 -0.9 Z" fill="#5a5a5a" transform="rotate(90)"/></svg>
<div class="b" style="left:9px;top:992px;width:340px;height:27.5px;background:#e6e6e6;"></div>
<div class="b" style="left:9px;top:992px;width:107.5px;height:27.5px;background:#fff;"></div>
<span class="t" style="font-family:'DejaVu Sans Condensed','DejaVu Sans',sans-serif;font-size:16.3px;line-height:21px;color:#2a7fd4;top:995.76px;letter-spacing:0.440px;left:20.00px;">Object Info</span>
<span class="t" style="font-family:'DejaVu Sans Condensed','DejaVu Sans',sans-serif;font-size:16.3px;line-height:21px;color:#333;top:995.76px;letter-spacing:0.363px;left:127.50px;">Session</span>
<div class="b" style="left:358.7px;top:81.7px;width:1552px;height:28.5px;background:#e6e6e6;"></div>
<div class="b" style="left:358.7px;top:110px;width:1552px;height:3.2px;background:#0078d7;"></div>
<div class="b" style="left:467.5px;top:81.7px;width:207px;height:29px;background:#0078d7;"></div>
<span class="t" style="font-family:'Liberation Sans',sans-serif;font-size:18.4px;line-height:24px;color:#1a1a1a;top:82.62px;letter-spacing:-0.095px;left:368.60px;transform:scaleX(0.92);transform-origin:0 0;">Query 1</span>
<span class="t" style="font-family:'Liberation Sans',sans-serif;font-size:18.2px;line-height:24px;color:#fff;top:82.69px;letter-spacing:-0.066px;left:478.20px;transform:scaleX(0.92);transform-origin:0 0;">CreateWorldDataDB*</span>
<svg class="b" style="left:653px;top:91.5px;" width="13" height="12" viewBox="0 0 13 12"><path d="M1.5 1.5 L11 10.5 M11 1.5 L1.5 10.5" stroke="#a9d2f3" stroke-width="1.6" fill="none"/></svg>
<div class="b" style="left:358.7px;top:113.2px;width:1552px;height:39.5px;background:linear-gradient(#fdfdfd,#f9f9f9 40%,#f1f1f1);"></div>
<svg class="b" style="left:358px;top:113px;" width="900" height="40" viewBox="358 113 900 40"><defs><linearGradient id="boltg" x1="0" y1="0" x2="1" y2="1"><stop offset="0" stop-color="#fbf0a0"/><stop offset="0.45" stop-color="#f1d348"/><stop offset="1" stop-color="#c9a22e"/></linearGradient><linearGradient id="foldg" x1="0" y1="0" x2="0" y2="1"><stop offset="0" stop-color="#a3c7e4"/><stop offset="1" stop-color="#5d8fbb"/></linearGradient><linearGradient id="btng" x1="0" y1="0" x2="0" y2="1"><stop offset="0" stop-color="#fdfdfd"/><stop offset="1" stop-color="#cdcdcd"/></linearGradient><linearGradient id="btng2" x1="0" y1="0" x2="0" y2="1"><stop offset="0" stop-color="#e6e6e6"/><stop offset="1" stop-color="#b4b4b4"/></linearGradient><linearGradient id="starg" x1="0" y1="0" x2="1" y2="1"><stop offset="0" stop-color="#fde37a"/><stop offset="1" stop-color="#e6a21a"/></linearGradient></defs><path d="M378.4 142 V124 Q378.4 122.4 380 122.4 H386.6 Q387.8 122.4 388.2 123.6 L388.8 125.4 H400 Q401.6 125.4 401.6 127 V142 Q401.6 142.6 401 142.6 H379 Q378.4 142.6 378.4 142 Z" fill="url(#foldg)" stroke="#4f7fa8" stroke-width="0.9"/><rect x="420.4" y="123.8" width="18.8" height="18.6" rx="1.4" fill="#4b7ca2" stroke="#3c6a8e" stroke-width="0.9"/><rect x="424.4" y="125.4" width="10.8" height="6.4" fill="#fafcff"/><rect x="425.4" y="136.4" width="9.2" height="5.6" fill="#dfe7ee"/><rect x="431" y="137.6" width="2.2" height="3.6" fill="#4b7ca2"/><path d="M456.6 123.6 V142.6" stroke="#c2c2c2" stroke-width="1.3"/><path d="M475.2 120.7 L490 120.7 L481.6 127.6 L490.6 127.6 L471.4 145.4 L478 132.6 L469.6 132.6 Z" fill="url(#boltg)" stroke="#b38a2c" stroke-width="1.1" stroke-linejoin="round"/><path d="M515.8 120.7 L530.6 120.7 L522.2 127.6 L531.2 127.6 L512 145.4 L518.6 132.6 L510.2 132.6 Z" fill="url(#boltg)" stroke="#b38a2c" stroke-width="1.1" stroke-linejoin="round"/><path d="M519.4 128.4 H524.4 M521.9 128.4 V141.6 M519 141.8 H524.8" stroke="#4a4a4a" stroke-width="3.2"/><path d="M519.4 128.4 H524.4 M521.9 128.4 V141.6 M519 141.8 H524.8" stroke="#e8e8e8" stroke-width="1.5"/><path d="M553.2 120.7 L568 120.7 L559.6 127.6 L568.6 127.6 L549.4 145.4 L556 132.6 L547.6 132.6 Z" fill="url(#boltg)" stroke="#b38a2c" stroke-width="1.1" stroke-linejoin="round"/><circle cx="559.6" cy="131.6" r="7.4" fill="#e4eefc" stroke="#555" stroke-width="1.9"/><circle cx="559.6" cy="128.2" r="1.7" fill="#6fa0e6"/><circle cx="556.4" cy="134" r="1.7" fill="#6fa0e6"/><circle cx="562.8" cy="134" r="1.7" fill="#6fa0e6"/><path d="M565.2 137.4 L573.4 144.4" stroke="#4a4a4a" stroke-width="3"/><polygon points="612.441,137.722 605.622,144.541 595.978,144.541 589.159,137.722 589.159,128.078 595.978,121.259 605.622,121.259 612.441,128.078" fill="#c4c4c4" stroke="#b6b6b6" stroke-width="1"/><path d="M596 135 V127.4 M598.8 133 V125 M601.6 133 V124.4 M604.4 133 V125.6" stroke="#fafafa" stroke-width="2.1" stroke-linecap="round"/><path d="M594.8 133.6 Q594.6 139.6 600.4 140.6 Q605.4 140.6 606.4 135.6 L608.8 131.4 Q606.6 130.6 605 133.4 V132 H595 Z" fill="#fafafa"/><path d="M627.6 123.6 V142.6" stroke="#c2c2c2" stroke-width="1.3"/><rect x="637.8" y="120.6" width="24.6" height="24.8" rx="3.4" fill="url(#btng)" stroke="#8a8a8a" stroke-width="1.2"/><circle cx="645.4" cy="130.4" r="6.4" fill="#cf2030" stroke="#8e1220" stroke-width="0.8"/><path d="M642.6 127.6 L648.2 133.2 M648.2 127.6 L642.6 133.2" stroke="#fff" stroke-width="2"/><circle cx="654.8" cy="136.6" r="7" fill="#e8482a" stroke="#a82a14" stroke-width="0.8"/><path d="M651.6 137.2 V133.6 M653.4 136.4 V132.4 M655.2 136.4 V132.2 M657 136.4 V133" stroke="#fff" stroke-width="1.3" stroke-linecap="round"/><path d="M651 136.6 Q651 140.8 654.4 141.2 Q657.6 141 658 138 L659.2 135.8 Q658 135.4 657.4 136.8 Z" fill="#fff"/><path d="M641.4 138.4 V141.6 H646.6 M644.8 139.8 L646.8 141.6 L644.8 143.4" stroke="#333" stroke-width="1.1" fill="none"/><path d="M677 123.6 V142.6" stroke="#c2c2c2" stroke-width="1.3"/><circle cx="699.6" cy="133" r="12.5" fill="#c5c5c5"/><path d="M692.8 133.4 L697.6 138 L706.4 128.4" stroke="#f6f6f6" stroke-width="3.3" fill="none"/><circle cx="740.2" cy="133" r="12.5" fill="#c5c5c5"/><path d="M735 127.8 L745.4 138.2 M745.4 127.8 L735 138.2" stroke="#f6f6f6" stroke-width="3.3" fill="none"/><rect x="766.2" y="118.4" width="32" height="31" fill="#eef3fa" stroke="#0f7ad8" stroke-width="1.9"/><rect x="768.8" y="120.8" width="24.8" height="24.6" rx="3.4" fill="url(#btng2)" stroke="#8a8a8a" stroke-width="1"/><g transform="translate(771.6,122.4) scale(0.72)"><path d="M6.2 0.5 L21 0.5 L12.6 7.4 L21.6 7.4 L2.4 25.2 L9 12.4 L0.6 12.4 Z" fill="url(#boltg)" stroke="#b38a2c" stroke-width="1.1" stroke-linejoin="round"/></g><circle cx="784.8" cy="138.2" r="5.6" fill="#4f8fe6" stroke="#2f6fc8" stroke-width="0.8"/><path d="M781.8 138.2 L784 140.4 L788 136" stroke="#fff" stroke-width="1.6" fill="none"/><circle cx="788.2" cy="126" r="1.5" fill="#3ec43e"/><path d="M807.6 123.6 V142.6" stroke="#c2c2c2" stroke-width="1.3"/><path d="M1004.2 123.6 V142.6" stroke="#c2c2c2" stroke-width="1.3"/><polygon points="1026.8,123 1029.68,130.636 1037.83,131.015 1031.46,136.114 1033.62,143.985 1026.8,139.5 1019.98,143.985 1022.14,136.114 1015.77,131.015 1023.92,130.636" fill="url(#starg)" stroke="#c98a14" stroke-width="1" stroke-linejoin="round"/><path d="M1033 136.2 H1037.4 V140 H1041 V144.2 H1037.4 V147.4 H1033 V144.2 H1029.4 V140 H1033 Z" fill="#8fd45c" stroke="#4f8f2a" stroke-width="1.1"/><path d="M1053.6 123.6 V142.6" stroke="#c2c2c2" stroke-width="1.3"/><path d="M1082.6 126.6 L1087.6 123.4" stroke="#8a5a24" stroke-width="3.4" stroke-linecap="round"/><path d="M1078.2 124.8 L1085.2 132.8 L1082.4 135.4 L1075.6 128 Z" fill="#c8c0b0" stroke="#8a826e" stroke-width="0.8"/><path d="M1076.4 126.4 L1064.8 132 Q1072 135.2 1076.6 142.6 L1084 134.2 Z" fill="#d9b56a" stroke="#a8843c" stroke-width="0.9"/><path d="M1074.6 129.4 L1068 133.6 M1076.8 131.4 L1071.6 136.6 M1079 133.2 L1074.6 139.4 M1081 134.8 L1076.6 141.4" stroke="#a8843c" stroke-width="0.8"/><ellipse cx="1076.6" cy="145.2" rx="11" ry="1" fill="#d8d8d8"/><path d="M1120 137.6 L1127.4 144" stroke="#555" stroke-width="3.2"/><circle cx="1114.2" cy="131.4" r="8.1" fill="#f7f7f7" stroke="#5a5a5a" stroke-width="1.8"/><text x="1109.6" y="136" font-family="Liberation Sans,sans-serif" font-size="12" fill="#9a9a9a">A</text><rect x="1145.4" y="121" width="24" height="24.4" rx="3.4" fill="url(#btng)" stroke="#8a8a8a" stroke-width="1.2"/><text x="1150.4" y="139.6" font-family="Liberation Sans,sans-serif" font-weight="bold" font-size="21" fill="#3a3a3a" textLength="11.4" lengthAdjust="spacingAndGlyphs">¶</text><rect x="1185.6" y="121" width="24" height="24.4" rx="3.4" fill="url(#btng)" stroke="#8a8a8a" stroke-width="1.2"/><path d="M1191 128.6 H1204 V137.2 H1196" stroke="#333" stroke-width="2" fill="none"/><path d="M1198.4 132.8 L1193.4 137.2 L1198.4 141.6 Z" fill="#333"/></svg>
<div class="b" style="left:814.5px;top:117px;width:181px;height:31.5px;background:#fff;"></div>
<div class="b" style="left:978px;top:118px;width:17px;height:29.5px;background:#f7f7f7;"></div>
<svg class="b" style="left:981.5px;top:131px;" width="9" height="5" viewBox="0 0 9 5"><path d="M0 0 H9 L4.5 5 Z" fill="#111"/></svg>
<span class="t" style="font-family:'Liberation Sans',sans-serif;font-size:19px;line-height:25px;color:#111;top:121.31px;letter-spacing:-0.648px;left:820.00px;transform:scaleX(0.89);transform-origin:0 0;">Don't Limit</span>
<div class="b" style="left:358.7px;top:152.7px;width:1552px;height:534.5px;background:#fff;"></div>
<div class="b" style="left:463.2px;top:151px;width:1446.4px;height:33.8px;background:#efefef;"></div>
<span class="t" style="font-family:'Liberation Mono',monospace;font-size:17.45px;line-height:23px;color:#2d7fa8;top:159.66px;letter-spacing:0.035px;left:395.80px;-webkit-text-stroke:0.25px #2d7fa8;">1</span>
<span class="t" style="font-family:'Liberation Mono',monospace;font-size:17.45px;line-height:23px;color:#1583bf;top:159.66px;letter-spacing:0.035px;left:463.60px;white-space:pre;-webkit-text-stroke:0.42px #1583bf;">SELECT</span>
<span class="t" style="font-family:'Liberation Mono',monospace;font-size:17.45px;line-height:23px;color:#1c1c1c;top:159.66px;letter-spacing:0.035px;left:526.63px;white-space:pre;-webkit-text-stroke:0.42px #1c1c1c;"> </span>
<span class="t" style="font-family:'Liberation Mono',monospace;font-size:17.45px;line-height:23px;color:#1c1c1c;top:159.66px;letter-spacing:0.035px;left:537.13px;white-space:pre;-webkit-text-stroke:0.42px #1c1c1c;">*</span>
<span class="t" style="font-family:'Liberation Mono',monospace;font-size:17.45px;line-height:23px;color:#1c1c1c;top:159.66px;letter-spacing:0.035px;left:547.64px;white-space:pre;-webkit-text-stroke:0.42px #1c1c1c;"> </span>
<span class="t" style="font-family:'Liberation Mono',monospace;font-size:17.45px;line-height:23px;color:#1583bf;top:159.66px;letter-spacing:0.035px;left:558.14px;white-space:pre;-webkit-text-stroke:0.42px #1583bf;">AVG</span>
<span class="t" style="font-family:'Liberation Mono',monospace;font-size:17.45px;line-height:23px;color:#2d7fa8;top:191.21px;letter-spacing:0.035px;left:395.80px;-webkit-text-stroke:0.25px #2d7fa8;">2</span>
<span class="t" style="font-family:'Liberation Mono',monospace;font-size:17.45px;line-height:23px;color:#1583bf;top:191.21px;letter-spacing:0.035px;left:463.60px;white-space:pre;-webkit-text-stroke:0.42px #1583bf;">FROM</span>
<span class="t" style="font-family:'Liberation Mono',monospace;font-size:17.45px;line-height:23px;color:#1c1c1c;top:191.21px;letter-spacing:0.035px;left:505.62px;white-space:pre;-webkit-text-stroke:0.42px #1c1c1c;"> world_temperatures</span>
<span class="t" style="font-family:'Liberation Mono',monospace;font-size:17.45px;line-height:23px;color:#2d7fa8;top:222.76px;letter-spacing:0.035px;left:395.80px;-webkit-text-stroke:0.25px #2d7fa8;">3</span>
<span class="t" style="font-family:'Liberation Mono',monospace;font-size:17.45px;line-height:23px;color:#1583bf;top:222.76px;letter-spacing:0.035px;left:463.60px;white-space:pre;-webkit-text-stroke:0.42px #1583bf;">WHERE</span>
<span class="t" style="font-family:'Liberation Mono',monospace;font-size:17.45px;line-height:23px;color:#1c1c1c;top:222.76px;letter-spacing:0.035px;left:516.12px;white-space:pre;-webkit-text-stroke:0.42px #1c1c1c;"> calendar_year &gt;=</span>
<span class="t" style="font-family:'Liberation Mono',monospace;font-size:17.45px;line-height:23px;color:#e38a1e;top:222.76px;letter-spacing:0.035px;left:694.71px;white-space:pre;-webkit-text-stroke:0.42px #e38a1e;">2000</span>
<span class="t" style="font-family:'Liberation Mono',monospace;font-size:17.45px;line-height:23px;color:#1c1c1c;top:222.76px;letter-spacing:0.035px;left:736.73px;white-space:pre;-webkit-text-stroke:0.42px #1c1c1c;"> </span>
<span class="t" style="font-family:'Liberation Mono',monospace;font-size:17.45px;line-height:23px;color:#1583bf;top:222.76px;letter-spacing:0.035px;left:747.24px;white-space:pre;-webkit-text-stroke:0.42px #1583bf;">AND</span>
<span class="t" style="font-family:'Liberation Mono',monospace;font-size:17.45px;line-height:23px;color:#1c1c1c;top:222.76px;letter-spacing:0.035px;left:778.75px;white-space:pre;-webkit-text-stroke:0.42px #1c1c1c;"> calendar_year&lt;=</span>
<span class="t" style="font-family:'Liberation Mono',monospace;font-size:17.45px;line-height:23px;color:#e38a1e;top:222.76px;letter-spacing:0.035px;left:946.83px;white-space:pre;-webkit-text-stroke:0.42px #e38a1e;">2010</span>
<span class="t" style="font-family:'Liberation Mono',monospace;font-size:17.45px;line-height:23px;color:#1c1c1c;top:222.76px;letter-spacing:0.035px;left:988.85px;white-space:pre;-webkit-text-stroke:0.42px #1c1c1c;"> </span>
<span class="t" style="font-family:'Liberation Mono',monospace;font-size:17.45px;line-height:23px;color:#1583bf;top:222.76px;letter-spacing:0.035px;left:999.36px;white-space:pre;-webkit-text-stroke:0.42px #1583bf;">AND</span>
<span class="t" style="font-family:'Liberation Mono',monospace;font-size:17.45px;line-height:23px;color:#1c1c1c;top:222.76px;letter-spacing:0.035px;left:1030.87px;white-space:pre;-webkit-text-stroke:0.42px #1c1c1c;"> country_code = </span>
<span class="t" style="font-family:'Liberation Mono',monospace;font-size:17.45px;line-height:23px;color:#e38a1e;top:222.76px;letter-spacing:0.035px;left:1198.95px;white-space:pre;-webkit-text-stroke:0.42px #e38a1e;">"GBR"</span>
<span class="t" style="font-family:'Liberation Mono',monospace;font-size:17.45px;line-height:23px;color:#2d7fa8;top:254.31px;letter-spacing:0.035px;left:395.80px;-webkit-text-stroke:0.25px #2d7fa8;">4</span>
<span class="t" style="font-family:'Liberation Mono',monospace;font-size:17.45px;line-height:23px;color:#1583bf;top:254.31px;letter-spacing:0.035px;left:463.60px;white-space:pre;-webkit-text-stroke:0.42px #1583bf;">GROUP BY</span>
<span class="t" style="font-family:'Liberation Mono',monospace;font-size:17.45px;line-height:23px;color:#2d7fa8;top:285.86px;letter-spacing:0.035px;left:395.80px;-webkit-text-stroke:0.25px #2d7fa8;">5</span>
<svg class="b" style="left:415.4px;top:161px;" width="15.3" height="15.3" viewBox="0 0 15.3 15.3"><rect x="0" y="0" width="15.3" height="15.3" rx="3.2" fill="#d9354c"/><path d="M4.4 4.4 L10.9 10.9 M10.9 4.4 L4.4 10.9" stroke="#fff" stroke-width="2.6" fill="none"/></svg>
<div class="b" style="left:588.1px;top:153.4px;width:2.8px;height:31.2px;background:#383838;"></div>
<svg class="b" style="left:557.9px;top:176.2px;" width="30.2" height="5" viewBox="0 0 30.2 5"><path d="M0 0.6 L3 4.4 L6 0.6 L9 4.4 L12 0.6 L15 4.4 L18 0.6 L21 4.4 L24 0.6 L27 4.4 L30 0.6" stroke="#d23a4c" stroke-width="1.15" fill="none"/></svg>
<div class="b" style="left:358.7px;top:687.2px;width:1552px;height:24px;background:#f0f0f0;"></div>
<div class="b" style="left:384px;top:688.3px;width:723.5px;height:21.4px;background:#cdcdcd;"></div>
<svg class="b" style="left:362.2px;top:691px;" width="16" height="16" viewBox="-8 -8 16 16"><path d="M-5.5 4.7 L-5.5 0.9 L0 -4.7 L5.5 0.9 L5.5 4.7 L0 -0.9 Z" fill="#5a5a5a" transform="rotate(270)"/></svg>
<svg class="b" style="left:1890.6px;top:691px;" width="16" height="16" viewBox="-8 -8 16 16"><path d="M-5.5 4.7 L-5.5 0.9 L0 -4.7 L5.5 0.9 L5.5 4.7 L0 -0.9 Z" fill="#5a5a5a" transform="rotate(90)"/></svg>
<div class="b" style="left:358.7px;top:721px;width:1552px;height:30.5px;background:#e6e6e6;"></div>
<svg class="b" style="left:426.1px;top:732.7px;" width="1478" height="7.5" viewBox="0 0 1478 7.5"><defs><pattern id="p426_732" width="6" height="6" patternUnits="userSpaceOnUse"><rect x="0" y="0" width="1.45" height="1.45" fill="#989898"/><rect x="3" y="3" width="1.45" height="1.45" fill="#989898"/></pattern></defs><rect x="0" y="0" width="1478" height="7" fill="url(#p426_732)"/></svg>
<span class="t" style="font-family:'Liberation Sans',sans-serif;font-size:19px;line-height:25px;color:#6a6a6a;top:724.31px;letter-spacing:-0.087px;left:368.80px;transform:scaleX(0.89);transform-origin:0 0;">Output</span>
<div class="b" style="left:358.7px;top:751.5px;width:1552px;height:42px;background:#f4f4f7;"></div>
<svg class="b" style="left:368px;top:760px;" width="24" height="26" viewBox="368 760 24 26"><path d="M378.1 763.4 H389.9 V777.6" stroke="#555" stroke-width="1.5" fill="none"/><path d="M375 766.4 H386.9 V780.6" stroke="#555" stroke-width="1.5" fill="none"/><rect x="371.1" y="769.8" width="12" height="13.2" fill="none" stroke="#505050" stroke-width="1.6"/></svg>
<div class="b" style="left:400.3px;top:758.6px;width:224.7px;height:31px;background:#fff;"></div>
<div class="b" style="left:607px;top:761px;width:16.5px;height:26px;background:#ececec;"></div>
<svg class="b" style="left:610.8px;top:771.5px;" width="9" height="5" viewBox="0 0 9 5"><path d="M0 0 H9 L4.5 5 Z" fill="#111"/></svg>
<span class="t" style="font-family:'Liberation Sans',sans-serif;font-size:19px;line-height:25px;color:#111;top:761.71px;letter-spacing:-0.420px;left:405.70px;transform:scaleX(0.89);transform-origin:0 0;">Action Output</span>
<div class="b" style="left:358.7px;top:793.5px;width:1528px;height:227.2px;background:#fff;"></div>
<div class="b" style="left:1886.7px;top:793.5px;width:24px;height:227.2px;background:#f0f0f0;"></div>
<div class="b" style="left:1887.2px;top:970px;width:22px;height:25px;background:#cdcdcd;"></div>
<svg class="b" style="left:1890.3px;top:798.8px;" width="16" height="16" viewBox="-8 -8 16 16"><path d="M-5.5 4.7 L-5.5 0.9 L0 -4.7 L5.5 0.9 L5.5 4.7 L0 -0.9 Z" fill="#5a5a5a" transform="rotate(0)"/></svg>
<svg class="b" style="left:1890.3px;top:1000.8px;" width="16" height="16" viewBox="-8 -8 16 16"><path d="M-5.5 4.7 L-5.5 0.9 L0 -4.7 L5.5 0.9 L5.5 4.7 L0 -0.9 Z" fill="#5a5a5a" transform="rotate(180)"/></svg>
<div class="b" style="left:390.3px;top:795.5px;width:1.3px;height:24px;background:#e2e2e2;"></div>
<div class="b" style="left:444.6px;top:795.5px;width:1.3px;height:24px;background:#e2e2e2;"></div>
<div class="b" style="left:521.3px;top:795.5px;width:1.3px;height:24px;background:#e2e2e2;"></div>
<div class="b" style="left:1117.3px;top:795.5px;width:1.3px;height:24px;background:#e2e2e2;"></div>
<div class="b" style="left:1715.3px;top:795.5px;width:1.3px;height:24px;background:#e2e2e2;"></div>
<div class="b" style="left:1885px;top:795.5px;width:1.3px;height:24px;background:#e2e2e2;"></div>
<span class="t" style="font-family:'DejaVu Sans Condensed','DejaVu Sans',sans-serif;font-size:13.8px;line-height:18px;color:#1a1a1a;top:799.02px;letter-spacing:-0.405px;left:400.50px;">#</span>
<span class="t" style="font-family:'DejaVu Sans Condensed','DejaVu Sans',sans-serif;font-size:13.8px;line-height:18px;color:#1a1a1a;top:799.02px;letter-spacing:0.312px;left:454.50px;">Time</span>
<span class="t" style="font-family:'DejaVu Sans Condensed','DejaVu Sans',sans-serif;font-size:13.8px;line-height:18px;color:#1a1a1a;top:799.02px;letter-spacing:0.485px;left:531.00px;">Action</span>
<span class="t" style="font-family:'DejaVu Sans Condensed','DejaVu Sans',sans-serif;font-size:13.8px;line-height:18px;color:#1a1a1a;top:799.02px;letter-spacing:0.153px;left:1128.00px;">Message</span>
<span class="t" style="font-family:'DejaVu Sans Condensed','DejaVu Sans',sans-serif;font-size:13.8px;line-height:18px;color:#1a1a1a;top:799.02px;letter-spacing:0.541px;left:1725.00px;">Duration / Fetch</span>
<div class="b" style="left:360px;top:821.3px;width:29.4px;height:31.4px;background:#eaf1fc;"></div>
<div class="b" style="left:391px;top:821.3px;width:52.9px;height:31.4px;background:#eaf1fc;"></div>
<div class="b" style="left:445.5px;top:821.3px;width:74.9px;height:31.4px;background:#eaf1fc;"></div>
<div class="b" style="left:522px;top:821.3px;width:594.4px;height:31.4px;background:#eaf1fc;"></div>
<div class="b" style="left:1118px;top:821.3px;width:597.1px;height:31.4px;background:#eaf1fc;"></div>
<div class="b" style="left:1716.7px;top:821.3px;width:167.2px;height:31.4px;background:#eaf1fc;"></div>
<svg class="b" style="left:365.7px;top:828.9px;" width="17.4" height="17.4" viewBox="0 0 17.4 17.4"><defs><radialGradient id="rg" cx="50%" cy="35%" r="65%"><stop offset="0" stop-color="#e84848"/><stop offset="0.7" stop-color="#c91d1d"/><stop offset="1" stop-color="#7e0c0c"/></radialGradient></defs><circle cx="8.7" cy="8.7" r="8.4" fill="url(#rg)"/><path d="M5.3 5.3 L12.1 12.1 M12.1 5.3 L5.3 12.1" stroke="#fff" stroke-width="2.6" fill="none"/></svg>
<span class="t" style="font-family:'Liberation Sans',sans-serif;font-size:18.8px;line-height:24px;color:#1a1a1a;top:823.28px;word-spacing:1.600px;letter-spacing:-0.435px;left:411.00px;transform:scaleX(0.915);transform-origin:0 0;">196</span>
<span class="t" style="font-family:'Liberation Sans',sans-serif;font-size:18.8px;line-height:24px;color:#1a1a1a;top:823.28px;word-spacing:1.600px;letter-spacing:-0.469px;left:450.50px;transform:scaleX(0.915);transform-origin:0 0;">11:03:37</span>
<span class="t" style="font-family:'Liberation Sans',sans-serif;font-size:18.8px;line-height:24px;color:#1a1a1a;top:823.28px;word-spacing:1.600px;letter-spacing:-0.812px;left:526.30px;transform:scaleX(0.915);transform-origin:0 0;">SELECT calendar_year * FROM world_temperatures WHERE country_code = "...</span>
<span class="t" style="font-family:'Liberation Sans',sans-serif;font-size:18.8px;line-height:24px;color:#1a1a1a;top:823.28px;word-spacing:1.600px;letter-spacing:-0.934px;left:1123.00px;transform:scaleX(0.915);transform-origin:0 0;">Error Code: 1064. You have an error in your SQL syntax; check the manual that ...</span>
<span class="t" style="font-family:'Liberation Sans',sans-serif;font-size:18.8px;line-height:24px;color:#1a1a1a;top:823.28px;word-spacing:1.600px;letter-spacing:-0.674px;left:1720.00px;transform:scaleX(0.915);transform-origin:0 0;">0.000 sec</span>
<svg class="b" style="left:365.7px;top:861.9px;" width="17.4" height="17.4" viewBox="0 0 17.4 17.4"><defs><radialGradient id="gg" cx="50%" cy="35%" r="65%"><stop offset="0" stop-color="#3fc43f"/><stop offset="0.7" stop-color="#1f9e1f"/><stop offset="1" stop-color="#0b6b0b"/></radialGradient></defs><circle cx="8.7" cy="8.7" r="8.4" fill="url(#gg)"/><path d="M4.6 9 L7.6 11.8 L12.8 6" stroke="#fff" stroke-width="2.5" fill="none"/></svg>
<span class="t" style="font-family:'Liberation Sans',sans-serif;font-size:18.8px;line-height:24px;color:#1a1a1a;top:856.28px;word-spacing:1.600px;letter-spacing:-0.435px;left:411.00px;transform:scaleX(0.915);transform-origin:0 0;">197</span>
<span class="t" style="font-family:'Liberation Sans',sans-serif;font-size:18.8px;line-height:24px;color:#1a1a1a;top:856.28px;word-spacing:1.600px;letter-spacing:-0.469px;left:450.50px;transform:scaleX(0.915);transform-origin:0 0;">11:05:30</span>
<span class="t" style="font-family:'Liberation Sans',sans-serif;font-size:18.8px;line-height:24px;color:#1a1a1a;top:856.28px;word-spacing:1.600px;letter-spacing:-0.848px;left:526.30px;transform:scaleX(0.915);transform-origin:0 0;">SELECT * FROM world_temperatures WHERE country_code = "Great Britain"</span>
<span class="t" style="font-family:'Liberation Sans',sans-serif;font-size:18.8px;line-height:24px;color:#1a1a1a;top:856.28px;word-spacing:1.600px;letter-spacing:-1.021px;left:1123.00px;transform:scaleX(0.915);transform-origin:0 0;">0 row(s) returned</span>
<span class="t" style="font-family:'Liberation Sans',sans-serif;font-size:18.8px;line-height:24px;color:#1a1a1a;top:856.28px;word-spacing:1.600px;letter-spacing:-0.618px;left:1720.00px;transform:scaleX(0.915);transform-origin:0 0;">0.000 sec / 0.000 sec</span>
<div class="b" style="left:360px;top:887.3px;width:29.4px;height:31.4px;background:#eaf1fc;"></div>
<div class="b" style="left:391px;top:887.3px;width:52.9px;height:31.4px;background:#eaf1fc;"></div>
<div class="b" style="left:445.5px;top:887.3px;width:74.9px;height:31.4px;background:#eaf1fc;"></div>
<div class="b" style="left:522px;top:887.3px;width:594.4px;height:31.4px;background:#eaf1fc;"></div>
<div class="b" style="left:1118px;top:887.3px;width:597.1px;height:31.4px;background:#eaf1fc;"></div>
<div class="b" style="left:1716.7px;top:887.3px;width:167.2px;height:31.4px;background:#eaf1fc;"></div>
<svg class="b" style="left:365.7px;top:894.9px;" width="17.4" height="17.4" viewBox="0 0 17.4 17.4"><defs><radialGradient id="rg" cx="50%" cy="35%" r="65%"><stop offset="0" stop-color="#e84848"/><stop offset="0.7" stop-color="#c91d1d"/><stop offset="1" stop-color="#7e0c0c"/></radialGradient></defs><circle cx="8.7" cy="8.7" r="8.4" fill="url(#rg)"/><path d="M5.3 5.3 L12.1 12.1 M12.1 5.3 L5.3 12.1" stroke="#fff" stroke-width="2.6" fill="none"/></svg>
<span class="t" style="font-family:'Liberation Sans',sans-serif;font-size:18.8px;line-height:24px;color:#1a1a1a;top:889.28px;word-spacing:1.600px;letter-spacing:-0.435px;left:411.00px;transform:scaleX(0.915);transform-origin:0 0;">198</span>
<span class="t" style="font-family:'Liberation Sans',sans-serif;font-size:18.8px;line-height:24px;color:#1a1a1a;top:889.28px;word-spacing:1.600px;letter-spacing:-0.469px;left:450.50px;transform:scaleX(0.915);transform-origin:0 0;">11:12:37</span>
<span class="t" style="font-family:'Liberation Sans',sans-serif;font-size:18.8px;line-height:24px;color:#1a1a1a;top:889.28px;word-spacing:1.600px;letter-spacing:-0.821px;left:526.30px;transform:scaleX(0.915);transform-origin:0 0;">SELECT * FROM world_temperatures WHERE country_code = "Great Britain" A...</span>
<span class="t" style="font-family:'Liberation Sans',sans-serif;font-size:18.8px;line-height:24px;color:#1a1a1a;top:889.28px;word-spacing:1.600px;letter-spacing:-0.857px;left:1123.00px;transform:scaleX(0.915);transform-origin:0 0;">Error Code: 1111. Invalid use of group function</span>
<span class="t" style="font-family:'Liberation Sans',sans-serif;font-size:18.8px;line-height:24px;color:#1a1a1a;top:889.28px;word-spacing:1.600px;letter-spacing:-0.674px;left:1720.00px;transform:scaleX(0.915);transform-origin:0 0;">0.000 sec</span>
<svg class="b" style="left:365.7px;top:927.9px;" width="17.4" height="17.4" viewBox="0 0 17.4 17.4"><defs><radialGradient id="gg" cx="50%" cy="35%" r="65%"><stop offset="0" stop-color="#3fc43f"/><stop offset="0.7" stop-color="#1f9e1f"/><stop offset="1" stop-color="#0b6b0b"/></radialGradient></defs><circle cx="8.7" cy="8.7" r="8.4" fill="url(#gg)"/><path d="M4.6 9 L7.6 11.8 L12.8 6" stroke="#fff" stroke-width="2.5" fill="none"/></svg>
<span class="t" style="font-family:'Liberation Sans',sans-serif;font-size:18.8px;line-height:24px;color:#1a1a1a;top:922.28px;word-spacing:1.600px;letter-spacing:-0.435px;left:411.00px;transform:scaleX(0.915);transform-origin:0 0;">199</span>
<span class="t" style="font-family:'Liberation Sans',sans-serif;font-size:18.8px;line-height:24px;color:#1a1a1a;top:922.28px;word-spacing:1.600px;letter-spacing:-0.469px;left:450.50px;transform:scaleX(0.915);transform-origin:0 0;">11:12:50</span>
<span class="t" style="font-family:'Liberation Sans',sans-serif;font-size:18.8px;line-height:24px;color:#1a1a1a;top:922.28px;word-spacing:1.600px;letter-spacing:-0.848px;left:526.30px;transform:scaleX(0.915);transform-origin:0 0;">SELECT * FROM world_temperatures WHERE country_code = "Great Britain"</span>
<span class="t" style="font-family:'Liberation Sans',sans-serif;font-size:18.8px;line-height:24px;color:#1a1a1a;top:922.28px;word-spacing:1.600px;letter-spacing:-1.021px;left:1123.00px;transform:scaleX(0.915);transform-origin:0 0;">0 row(s) returned</span>
<span class="t" style="font-family:'Liberation Sans',sans-serif;font-size:18.8px;line-height:24px;color:#1a1a1a;top:922.28px;word-spacing:1.600px;letter-spacing:-0.618px;left:1720.00px;transform:scaleX(0.915);transform-origin:0 0;">0.000 sec / 0.000 sec</span>
<div class="b" style="left:360px;top:953.3px;width:29.4px;height:31.4px;background:#eaf1fc;"></div>
<div class="b" style="left:391px;top:953.3px;width:52.9px;height:31.4px;background:#eaf1fc;"></div>
<div class="b" style="left:445.5px;top:953.3px;width:74.9px;height:31.4px;background:#eaf1fc;"></div>
<div class="b" style="left:522px;top:953.3px;width:594.4px;height:31.4px;background:#eaf1fc;"></div>
<div class="b" style="left:1118px;top:953.3px;width:597.1px;height:31.4px;background:#eaf1fc;"></div>
<div class="b" style="left:1716.7px;top:953.3px;width:167.2px;height:31.4px;background:#eaf1fc;"></div>
<svg class="b" style="left:365.7px;top:960.9px;" width="17.4" height="17.4" viewBox="0 0 17.4 17.4"><defs><radialGradient id="gg" cx="50%" cy="35%" r="65%"><stop offset="0" stop-color="#3fc43f"/><stop offset="0.7" stop-color="#1f9e1f"/><stop offset="1" stop-color="#0b6b0b"/></radialGradient></defs><circle cx="8.7" cy="8.7" r="8.4" fill="url(#gg)"/><path d="M4.6 9 L7.6 11.8 L12.8 6" stroke="#fff" stroke-width="2.5" fill="none"/></svg>
<span class="t" style="font-family:'Liberation Sans',sans-serif;font-size:18.8px;line-height:24px;color:#1a1a1a;top:955.28px;word-spacing:1.600px;letter-spacing:-0.435px;left:411.00px;transform:scaleX(0.915);transform-origin:0 0;">200</span>
<span class="t" style="font-family:'Liberation Sans',sans-serif;font-size:18.8px;line-height:24px;color:#1a1a1a;top:955.28px;word-spacing:1.600px;letter-spacing:-0.469px;left:450.50px;transform:scaleX(0.915);transform-origin:0 0;">11:17:16</span>
<span class="t" style="font-family:'Liberation Sans',sans-serif;font-size:18.8px;line-height:24px;color:#1a1a1a;top:955.28px;word-spacing:1.600px;letter-spacing:-0.900px;left:526.30px;transform:scaleX(0.915);transform-origin:0 0;">SELECT *  FROM world_temperatures WHERE calendar_year &gt;=2000 AND cal...</span>
<span class="t" style="font-family:'Liberation Sans',sans-serif;font-size:18.8px;line-height:24px;color:#1a1a1a;top:955.28px;word-spacing:1.600px;letter-spacing:-0.950px;left:1123.00px;transform:scaleX(0.915);transform-origin:0 0;">528 row(s) returned</span>
<span class="t" style="font-family:'Liberation Sans',sans-serif;font-size:18.8px;line-height:24px;color:#1a1a1a;top:955.28px;word-spacing:1.600px;letter-spacing:-0.618px;left:1720.00px;transform:scaleX(0.915);transform-origin:0 0;">0.015 sec / 0.000 sec</span>
<svg class="b" style="left:365.7px;top:993.9px;" width="17.4" height="17.4" viewBox="0 0 17.4 17.4"><defs><radialGradient id="rg" cx="50%" cy="35%" r="65%"><stop offset="0" stop-color="#e84848"/><stop offset="0.7" stop-color="#c91d1d"/><stop offset="1" stop-color="#7e0c0c"/></radialGradient></defs><circle cx="8.7" cy="8.7" r="8.4" fill="url(#rg)"/><path d="M5.3 5.3 L12.1 12.1 M12.1 5.3 L5.3 12.1" stroke="#fff" stroke-width="2.6" fill="none"/></svg>
<span class="t" style="font-family:'Liberation Sans',sans-serif;font-size:18.8px;line-height:24px;color:#1a1a1a;top:988.28px;word-spacing:1.600px;letter-spacing:-0.435px;left:411.00px;transform:scaleX(0.915);transform-origin:0 0;">201</span>
<span class="t" style="font-family:'Liberation Sans',sans-serif;font-size:18.8px;line-height:24px;color:#1a1a1a;top:988.28px;word-spacing:1.600px;letter-spacing:-0.469px;left:450.50px;transform:scaleX(0.915);transform-origin:0 0;">11:52:47</span>
<span class="t" style="font-family:'Liberation Sans',sans-serif;font-size:18.8px;line-height:24px;color:#1a1a1a;top:988.28px;word-spacing:1.600px;letter-spacing:-0.978px;left:526.30px;transform:scaleX(0.915);transform-origin:0 0;">SELECT * AVG (monthly_temperature) = 3 FROM world_temperatures WHERE c...</span>
<span class="t" style="font-family:'Liberation Sans',sans-serif;font-size:18.8px;line-height:24px;color:#1a1a1a;top:988.28px;word-spacing:1.600px;letter-spacing:-0.934px;left:1123.00px;transform:scaleX(0.915);transform-origin:0 0;">Error Code: 1064. You have an error in your SQL syntax; check the manual that ...</span>
<span class="t" style="font-family:'Liberation Sans',sans-serif;font-size:18.8px;line-height:24px;color:#1a1a1a;top:988.28px;word-spacing:1.600px;letter-spacing:-0.674px;left:1720.00px;transform:scaleX(0.915);transform-origin:0 0;">0.015 sec</span>
</body></html>
